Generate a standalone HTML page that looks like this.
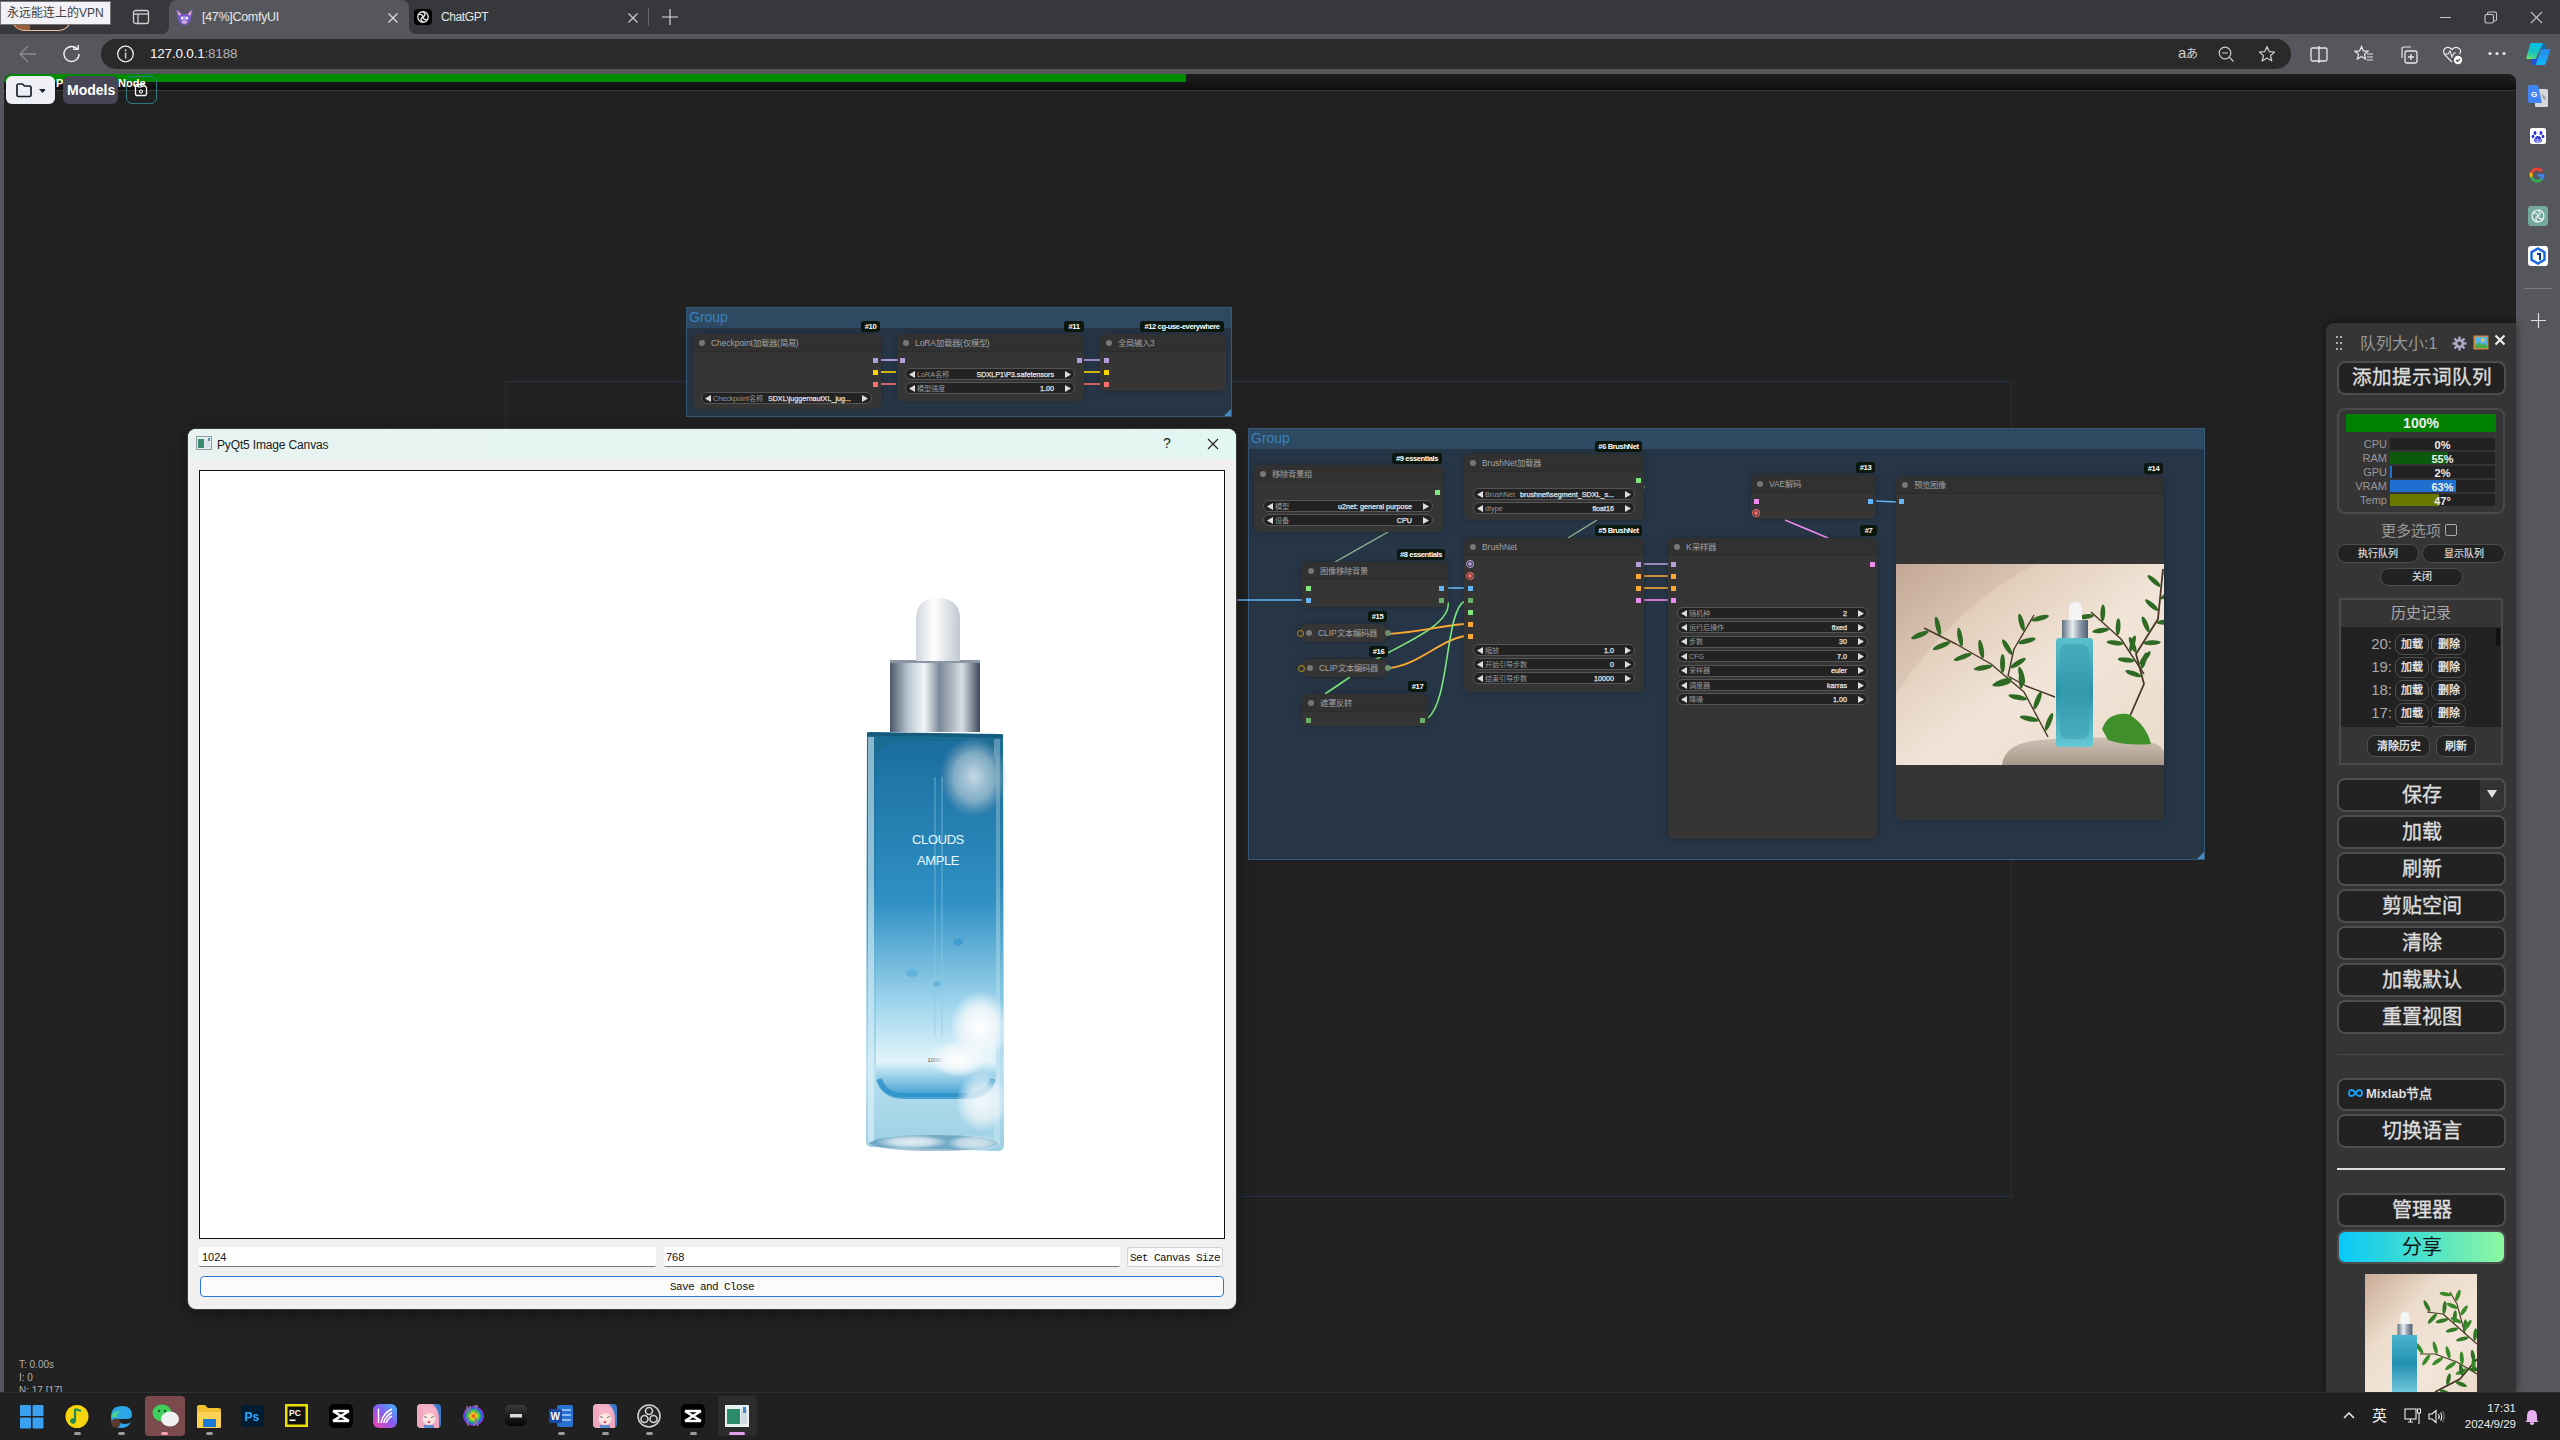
<!DOCTYPE html><html lang="zh-CN"><head><meta charset="utf-8"><style>
*{box-sizing:border-box;margin:0;padding:0}
html,body{width:2560px;height:1440px;overflow:hidden;background:#222;font-family:"Liberation Sans",sans-serif}
.a{position:absolute}
.t{position:absolute;white-space:nowrap;line-height:1}
</style></head><body><div class="a" style="left:0px;top:0px;width:2560px;height:34px;background:#37383c"></div>
<div class="a" style="left:0px;top:34px;width:2560px;height:40px;background:#56575c"></div>
<div class="a" style="left:0px;top:74px;width:4px;height:1318px;background:#56575c"></div>
<div class="a" style="left:2516px;top:74px;width:44px;height:1318px;background:#56575c"></div>
<div class="a" style="left:169px;top:0px;width:240px;height:34px;background:#56575c;border-radius:8px 8px 0 0"></div>
<div class="a" style="left:161px;top:26px;width:8px;height:8px;background:radial-gradient(circle at 0 0,#37383c 8px,#56575c 8.5px)"></div>
<div class="a" style="left:409px;top:26px;width:8px;height:8px;background:radial-gradient(circle at 100% 0,#37383c 8px,#56575c 8.5px)"></div>
<div class="a" style="left:11px;top:14px;width:61px;height:17px;border-radius:0 0 14px 14px;border:1.5px solid #e8c0a0;border-top:none;background:#3a3232"></div>
<div class="a" style="left:14px;top:22px;width:16px;height:8px;background:#c07040;border-radius:0 0 0 8px;opacity:.7"></div>
<div class="a" style="left:0px;top:1px;width:111px;height:24px;background:#f1f1f6;border:1px solid #777"></div>
<div class="t" style="left:7px;top:7px;font-size:12px;color:#404040">永远能连上的VPN</div>
<svg class="a" style="left:132px;top:9px;" width="18" height="16" viewBox="0 0 18 16"><rect x="1.5" y="1.5" width="15" height="13" rx="2" fill="none" stroke="#d0d0d0" stroke-width="1.3"/><line x1="1.5" y1="5" x2="16.5" y2="5" stroke="#d0d0d0" stroke-width="1.3"/><line x1="6" y1="5" x2="6" y2="14.5" stroke="#d0d0d0" stroke-width="1.3"/></svg>
<svg class="a" style="left:175px;top:8px;" width="19" height="18" viewBox="0 0 19 18"><path d="M1 1 L7 6 H12 L18 1 L16 10 Q15 17 9.5 17 Q4 17 3 10 Z" fill="#7a5ad0"/><path d="M2 2 L6 6 L4 8 Z M17 2 L13 6 L15 8 Z" fill="#f0b0c8"/><path d="M6 9 Q9.5 7 13 9 L12 14 Q9.5 16 7 14 Z" fill="#a890e8"/><circle cx="7" cy="10" r="1.2" fill="#fff"/><circle cx="12" cy="10" r="1.2" fill="#fff"/><path d="M7.5 14 Q9.5 15.5 11.5 14" stroke="#f4c0c8" stroke-width="1.6" fill="none"/></svg>
<div class="t" style="left:202px;top:11px;font-size:12.5px;letter-spacing:-0.3px;color:#e8e8e8">[47%]ComfyUI</div>
<svg class="a" style="left:387px;top:12px;" width="12" height="12" viewBox="0 0 12 12"><path d="M1.5 1.5 L10.5 10.5 M10.5 1.5 L1.5 10.5" stroke="#e0e0e0" stroke-width="1.1"/></svg>
<div class="a" style="left:414px;top:9px;width:18px;height:16px;background:#000;border-radius:4px"></div>
<svg class="a" style="left:415px;top:9px;" width="16" height="16" viewBox="0 0 16 16"><g fill="none" stroke="#e8e8e8" stroke-width="1.4"><circle cx="8" cy="8" r="5.2"/><path d="M8 2.8 Q12 6 8 8 Q4 10 8 13.2"/><path d="M3.5 5.4 Q8 5 8 8 Q8 11 12.5 10.6"/></g></svg>
<div class="t" style="left:441px;top:11px;font-size:12px;letter-spacing:-0.4px;color:#e8e8e8">ChatGPT</div>
<svg class="a" style="left:627px;top:12px;" width="12" height="12" viewBox="0 0 12 12"><path d="M1.5 1.5 L10.5 10.5 M10.5 1.5 L1.5 10.5" stroke="#d0d0d0" stroke-width="1.1"/></svg>
<div class="a" style="left:648px;top:8px;width:1px;height:18px;background:#666"></div>
<svg class="a" style="left:661px;top:8px;" width="18" height="18" viewBox="0 0 18 18"><path d="M9 1 V17 M1 9 H17" stroke="#e0e0e0" stroke-width="1.1"/></svg>
<div class="a" style="left:2440px;top:17px;width:11px;height:1px;background:#c8c8c8"></div>
<svg class="a" style="left:2484px;top:11px;" width="14" height="13" viewBox="0 0 14 13"><rect x="1" y="3.5" width="8.5" height="8.5" rx="1.5" fill="none" stroke="#c8c8c8" stroke-width="1.1"/><path d="M3.5 3.5 V2.5 Q3.5 1 5 1 H11 Q12.5 1 12.5 2.5 V8.5 Q12.5 10 11 10 H9.5" fill="none" stroke="#c8c8c8" stroke-width="1.1"/></svg>
<svg class="a" style="left:2530px;top:11px;" width="13" height="13" viewBox="0 0 13 13"><path d="M1 1 L12 12 M12 1 L1 12" stroke="#c8c8c8" stroke-width="1.1"/></svg>
<svg class="a" style="left:18px;top:45px;" width="22" height="18" viewBox="0 0 22 18"><path d="M10 1 L2 9 L10 17 M2 9 H18" fill="none" stroke="#8c8d91" stroke-width="1.3"/></svg>
<svg class="a" style="left:62px;top:45px;" width="20" height="18" viewBox="0 0 20 18"><path d="M15.5 4.5 A7.5 7.5 0 1 0 17 9" fill="none" stroke="#f2f2f2" stroke-width="1.4"/><path d="M11 4.2 H16.2 V-1" fill="none" stroke="#f2f2f2" stroke-width="1.4"/></svg>
<div class="a" style="left:101px;top:39px;width:2190px;height:30px;background:#2a2a2a;border-radius:15px"></div>
<svg class="a" style="left:116px;top:45px;" width="20" height="18" viewBox="0 0 20 18"><circle cx="9.5" cy="9" r="7.8" fill="none" stroke="#eee" stroke-width="1.3"/><rect x="8.8" y="7.5" width="1.6" height="6" fill="#ccc"/><circle cx="9.6" cy="5.2" r="1" fill="#ccc"/></svg>
<div class="t" style="left:150px;top:47px;font-size:13.5px;letter-spacing:-0.2px;color:#fafafa">127.0.0.1<span style="color:#b4b4b4">:8188</span></div>
<div class="t" style="left:2178px;top:45px;font-size:15px;color:#cfcfcf">a<span style="font-size:12px">あ</span></div>
<svg class="a" style="left:2218px;top:46px;" width="18" height="17" viewBox="0 0 18 17"><circle cx="7" cy="7" r="5.8" fill="none" stroke="#cfcfcf" stroke-width="1.2"/><path d="M4 7 H10 M11.2 11.2 L15.5 15.5" stroke="#cfcfcf" stroke-width="1.2"/></svg>
<svg class="a" style="left:2258px;top:45px;" width="18" height="18" viewBox="0 0 18 18"><path d="M9 1.5 L11.2 6.6 L16.6 7 L12.5 10.6 L13.8 16 L9 13.1 L4.2 16 L5.5 10.6 L1.4 7 L6.8 6.6 Z" fill="none" stroke="#cfcfcf" stroke-width="1.2" stroke-linejoin="round"/></svg>
<svg class="a" style="left:2310px;top:46px;" width="18" height="17" viewBox="0 0 18 17"><rect x="1" y="2" width="16" height="13" rx="1.5" fill="none" stroke="#e8e8e8" stroke-width="1.3"/><line x1="9" y1="0" x2="9" y2="17" stroke="#e8e8e8" stroke-width="1.4"/></svg>
<svg class="a" style="left:2354px;top:45px;" width="20" height="18" viewBox="0 0 20 18"><path d="M7.5 1.5 L9.4 5.9 L14 6.3 L10.5 9.3 L11.6 14 L7.5 11.5 L3.4 14 L4.5 9.3 L1 6.3 L5.6 5.9 Z" fill="none" stroke="#e8e8e8" stroke-width="1.2"/><path d="M13 9 H19 M13 12 H19 M13 15 H19" stroke="#e8e8e8" stroke-width="1.2"/></svg>
<svg class="a" style="left:2399px;top:45px;" width="19" height="19" viewBox="0 0 19 19"><path d="M3 13 V4 Q3 2 5 2 H12" fill="none" stroke="#e8e8e8" stroke-width="1.2"/><rect x="6" y="6" width="12" height="12" rx="2" fill="none" stroke="#e8e8e8" stroke-width="1.3"/><path d="M12 9 V15 M9 12 H15" stroke="#e8e8e8" stroke-width="1.3"/></svg>
<svg class="a" style="left:2442px;top:45px;" width="22" height="20" viewBox="0 0 22 20"><path d="M10 17 L3 10 Q0 6 3 3.5 Q6.5 1 10 4.5 Q13.5 1 17 3.5 Q20 6 17.5 9" fill="none" stroke="#e8e8e8" stroke-width="1.2"/><path d="M2 9 H6 L8 6 L10 12 L12 8 H14" fill="none" stroke="#e8e8e8" stroke-width="1.1"/><circle cx="16" cy="15" r="4.2" fill="#fff"/><path d="M14 15 L15.5 16.5 L18 13.8" stroke="#444" stroke-width="1.2" fill="none"/></svg>
<svg class="a" style="left:2488px;top:51px;" width="18" height="5" viewBox="0 0 18 5"><circle cx="2" cy="2.5" r="1.6" fill="#e8e8e8"/><circle cx="9" cy="2.5" r="1.6" fill="#e8e8e8"/><circle cx="16" cy="2.5" r="1.6" fill="#e8e8e8"/></svg>
<svg class="a" style="left:2510px;top:36px;" width="50" height="36" viewBox="0 0 50 36"><defs><linearGradient id="cpl" x1="0.6" y1="0" x2="0.3" y2="1"><stop offset="0" stop-color="#00bff0"/><stop offset=".6" stop-color="#1cc4b8"/><stop offset="1" stop-color="#5ae27a"/></linearGradient><linearGradient id="cpr" x1="0.6" y1="0" x2="0.4" y2="1"><stop offset="0" stop-color="#2a86ee"/><stop offset="1" stop-color="#10b8fa"/></linearGradient></defs><path d="M28 7 H32 Q34.5 7 35 9.5 L35.5 13 H30 Z" fill="#0a6cae"/><path d="M21 22 H27 L26.5 29 H24 Q22 29 21.6 27 Z" fill="#2252d6"/><path d="M21.5 7 H31.5 Q33 7 32.5 8.4 L26.2 21.8 Q25.6 23 24.3 23 H17.5 Q16 23 16.4 21.6 L20 8.4 Q20.4 7 21.5 7 Z" fill="url(#cpl)"/><path d="M32.5 13 H39 Q40.6 13 40.2 14.4 L35.8 27.6 Q35.3 29 34 29 H27.2 Q25.8 29 26.2 27.6 L30.6 14.4 Q31 13 32.5 13 Z" fill="url(#cpr)"/></svg>
<svg class="a" style="left:2527px;top:85px;" width="22" height="23" viewBox="0 0 22 23"><rect x="8" y="4" width="13" height="18" rx="1.5" fill="#d8d8d8"/><path d="M1 2 Q1 0 3 0 H11 L15 18 H3 Q1 18 1 16 Z" fill="#4286f5"/><text x="4" y="12" font-size="8" fill="#fff" font-family="Liberation Sans" font-weight="bold">G</text><path d="M15 9 L18 15 M16 12 H19" stroke="#888" stroke-width="1"/></svg>
<div class="a" style="left:2530px;top:128px;width:16px;height:16px;background:#fff;border-radius:2px"></div>
<svg class="a" style="left:2530px;top:128px;" width="16" height="16" viewBox="0 0 16 16"><g fill="#2932e1"><ellipse cx="5" cy="5" rx="1.5" ry="2"/><ellipse cx="11" cy="5" rx="1.5" ry="2"/><ellipse cx="3" cy="8.5" rx="1.4" ry="1.8"/><ellipse cx="13" cy="8.5" rx="1.4" ry="1.8"/><path d="M4 13 Q5 8 8 8 Q11 8 12 13 Q11 15 8 14.5 Q5 15 4 13Z"/></g><text x="5.2" y="13.5" font-size="5" fill="#fff" font-family="Liberation Sans">du</text></svg>
<svg class="a" style="left:2529px;top:167px;" width="18" height="18" viewBox="0 0 18 18"><g fill="none" stroke-width="3"><path d="M12.6 4.1 A6 6 0 0 0 2.4 6" stroke="#ea4335"/><path d="M2.4 6 A6 6 0 0 0 2.4 10.1" stroke="#fbbc05"/><path d="M2.4 10.1 A6 6 0 0 0 12.3 12.3" stroke="#34a853"/><path d="M12.3 12.3 A6 6 0 0 0 14 8.5" stroke="#4285f4"/></g><path d="M8.5 7.2 H15.4 V9.6 H8.5 Z" fill="#4285f4"/></svg>
<div class="a" style="left:2528px;top:206px;width:20px;height:20px;background:#75a99c;border-radius:3px"></div>
<svg class="a" style="left:2528px;top:206px;" width="20" height="20" viewBox="0 0 20 20"><g fill="none" stroke="#fff" stroke-width="1.2" opacity=".9"><circle cx="10" cy="10" r="6"/><path d="M10 4 Q14.5 7.5 10 10 Q5.5 12.5 10 16"/><path d="M4.8 7 Q10 6.5 10 10 Q10 13.5 15.2 13"/></g></svg>
<div class="a" style="left:2528px;top:246px;width:20px;height:20px;background:#fff;border-radius:3px"></div>
<svg class="a" style="left:2528px;top:246px;" width="20" height="20" viewBox="0 0 20 20"><path d="M10 2.5 L16.5 6.2 V13.8 L10 17.5 L3.5 13.8 V6.2 Z" fill="none" stroke="#1566e0" stroke-width="2.4"/><path d="M9 8 H12 V14" fill="none" stroke="#0a3a90" stroke-width="2"/></svg>
<div class="a" style="left:2524px;top:288px;width:28px;height:1px;background:#7a7b80"></div>
<svg class="a" style="left:2530px;top:312px;" width="17" height="17" viewBox="0 0 17 17"><path d="M8.5 1 V16 M1 8.5 H16" stroke="#e0e0e0" stroke-width="1.2"/></svg>
<div class="a" style="left:0px;top:74px;width:2516px;height:20px;background:#56575c"></div>
<div class="a" style="left:4px;top:74px;width:2512px;height:1318px;background-color:#222;background-image:linear-gradient(#1e1e1e 1px,transparent 1px),linear-gradient(90deg,#1e1e1e 1px,transparent 1px),linear-gradient(#202020 1px,transparent 1px),linear-gradient(90deg,#202020 1px,transparent 1px);background-size:24px 24px,24px 24px,6px 6px,6px 6px;background-position:-1px 2px,-3px 0,-1px 2px,-3px 0;border-radius:8px 8px 0 0;overflow:hidden"></div>
<div class="a" style="left:4px;top:74px;width:2512px;height:16px;background:linear-gradient(#202020,#0e0e0e);border-radius:8px 8px 0 0"></div>
<div class="a" style="left:4px;top:90px;width:2512px;height:1px;background:#3a3a3a"></div>
<div class="a" style="left:4px;top:74px;width:1182px;height:8px;background:#008a00;border-radius:8px 0 0 0"></div>
<div class="a" style="left:505px;top:381px;width:1507px;height:816px;border:1px solid #1f3147"></div>
<div class="t" style="left:56px;top:78px;font-size:11px;color:#fff;font-weight:bold">P</div>
<div class="t" style="left:118px;top:78px;font-size:11px;color:#fff;font-weight:bold">Node</div>
<div class="a" style="left:6px;top:76px;width:49px;height:28px;background:#eef0f6;border-radius:6px"></div>
<svg class="a" style="left:15px;top:82px;" width="30" height="16" viewBox="0 0 30 16"><path d="M2 3.5 Q2 2 3.5 2 H7.5 L9.5 4 H14.5 Q16 4 16 5.5 V13 Q16 14.5 14.5 14.5 H3.5 Q2 14.5 2 13 Z" fill="none" stroke="#1b2030" stroke-width="1.7" stroke-linejoin="round"/><path d="M24 7 H31 L27.5 11 Z" fill="#1b2030"/></svg>
<div class="a" style="left:63px;top:76px;width:55px;height:28px;background:#464656;border-radius:6px"></div>
<div class="t" style="left:67px;top:83px;font-size:14px;color:#fff;font-weight:bold">Models</div>
<div class="a" style="left:126px;top:76px;width:31px;height:28px;border:1px solid #2f7b80;border-radius:6px"></div>
<svg class="a" style="left:134px;top:83px;" width="14" height="14" viewBox="0 0 14 14"><path d="M1.5 3 Q1.5 1.5 3 1.5 H9.5 L12.5 4.5 V11 Q12.5 12.5 11 12.5 H3 Q1.5 12.5 1.5 11 Z" fill="none" stroke="#fff" stroke-width="1.3"/><circle cx="7" cy="8.5" r="1.5" fill="none" stroke="#fff" stroke-width="1.1"/><path d="M4 1.5 V4 H8" stroke="#fff" stroke-width="1" fill="none"/></svg>
<div class="t" style="left:19px;top:1360px;font-size:10px;color:#b0b0b0">T: 0.00s</div>
<div class="t" style="left:19px;top:1373px;font-size:10px;color:#b0b0b0">I: 0</div>
<div class="t" style="left:19px;top:1386px;font-size:10px;color:#b0b0b0">N: 17 [17]</div>
<div class="a" style="left:686px;top:307px;width:546px;height:110px;background:#273646;border:1px solid #35597a"></div>
<div class="a" style="left:687px;top:308px;width:544px;height:20px;background:#2e4a62"></div>
<div class="t" style="left:689px;top:310px;font-size:14px;color:#3a82bd">Group</div>
<svg class="a" style="left:1224px;top:409px;" width="7" height="7" viewBox="0 0 7 7"><path d="M7 0 V7 H0 Z" fill="#4a8ac0"/></svg>
<div class="a" style="left:693px;top:334px;width:188px;height:75px;background:#353535;border-radius:6px;box-shadow:0 0 6px rgba(0,0,0,.25)"></div>
<div class="a" style="left:693px;top:334px;width:188px;height:18px;background:#313131;border-radius:6px 6px 0 0;border-bottom:1px solid #2c2c2c"></div>
<div class="a" style="left:699px;top:340px;width:6px;height:6px;background:#777;border-radius:50%"></div>
<div class="t" style="left:711px;top:339px;font-size:8.4px;color:#a2a2a2">Checkpoint加载器(简易)</div>
<div class="a" style="left:861px;top:321px;width:19px;height:11px;background:#0b170c;border-radius:3px"></div>
<div class="t" style="left:861px;top:323px;width:19px;text-align:center;font-size:7.6px;color:#fff;font-weight:bold;letter-spacing:-0.4px">#10</div>
<div class="a" style="left:872.5px;top:357.5px;width:5px;height:5px;background:#b39ddb"></div>
<div class="a" style="left:872.5px;top:369.5px;width:5px;height:5px;background:#ffd500"></div>
<div class="a" style="left:872.5px;top:381.5px;width:5px;height:5px;background:#ff6e6e"></div>
<div class="a" style="left:701px;top:392px;width:171px;height:12px;background:#222;border:1px solid #555;border-radius:6px"></div>
<svg class="a" style="left:704.5px;top:394.5px;" width="6" height="7" viewBox="0 0 6 7"><path d="M6 0 V7 L0 3.5 Z" fill="#ddd"/></svg>
<svg class="a" style="left:862px;top:394.5px;" width="6" height="7" viewBox="0 0 6 7"><path d="M0 0 V7 L6 3.5 Z" fill="#ddd"/></svg>
<div class="t" style="left:713px;top:394.6px;font-size:7.2px;color:#999">Checkpoint名称</div>
<div class="t" style="left:651px;top:394.6px;font-size:7.2px;color:#e4e4e4;width:200px;text-align:right;-webkit-text-stroke:0.25px #e4e4e4"><b style="font-weight:normal;color:#ddd">SDXL\juggernautXL_jug...</b></div>
<div class="a" style="left:897px;top:334px;width:187px;height:67px;background:#353535;border-radius:6px;box-shadow:0 0 6px rgba(0,0,0,.25)"></div>
<div class="a" style="left:897px;top:334px;width:187px;height:18px;background:#313131;border-radius:6px 6px 0 0;border-bottom:1px solid #2c2c2c"></div>
<div class="a" style="left:903px;top:340px;width:6px;height:6px;background:#777;border-radius:50%"></div>
<div class="t" style="left:915px;top:339px;font-size:8.4px;color:#a2a2a2">LoRA加载器(仅模型)</div>
<div class="a" style="left:1064px;top:321px;width:20px;height:11px;background:#0b170c;border-radius:3px"></div>
<div class="t" style="left:1064px;top:323px;width:20px;text-align:center;font-size:7.6px;color:#fff;font-weight:bold;letter-spacing:-0.4px">#11</div>
<div class="a" style="left:899.5px;top:357.5px;width:5px;height:5px;background:#b39ddb"></div>
<div class="a" style="left:1076.5px;top:357.5px;width:5px;height:5px;background:#b39ddb"></div>
<div class="a" style="left:905px;top:368px;width:170px;height:12px;background:#222;border:1px solid #555;border-radius:6px"></div>
<svg class="a" style="left:908.5px;top:370.5px;" width="6" height="7" viewBox="0 0 6 7"><path d="M6 0 V7 L0 3.5 Z" fill="#ddd"/></svg>
<svg class="a" style="left:1065px;top:370.5px;" width="6" height="7" viewBox="0 0 6 7"><path d="M0 0 V7 L6 3.5 Z" fill="#ddd"/></svg>
<div class="t" style="left:917px;top:370.6px;font-size:7.2px;color:#999">LoRA名称</div>
<div class="t" style="left:854px;top:370.6px;font-size:7.2px;color:#e4e4e4;width:200px;text-align:right;-webkit-text-stroke:0.25px #e4e4e4">SDXLP1\P3.safetensors</div>
<div class="a" style="left:905px;top:382px;width:170px;height:12px;background:#222;border:1px solid #555;border-radius:6px"></div>
<svg class="a" style="left:908.5px;top:384.5px;" width="6" height="7" viewBox="0 0 6 7"><path d="M6 0 V7 L0 3.5 Z" fill="#ddd"/></svg>
<svg class="a" style="left:1065px;top:384.5px;" width="6" height="7" viewBox="0 0 6 7"><path d="M0 0 V7 L6 3.5 Z" fill="#ddd"/></svg>
<div class="t" style="left:917px;top:384.6px;font-size:7.2px;color:#999">模型强度</div>
<div class="t" style="left:854px;top:384.6px;font-size:7.2px;color:#e4e4e4;width:200px;text-align:right;-webkit-text-stroke:0.25px #e4e4e4">1.00</div>
<div class="a" style="left:1100px;top:334px;width:126px;height:57px;background:#353535;border-radius:6px;box-shadow:0 0 6px rgba(0,0,0,.25)"></div>
<div class="a" style="left:1100px;top:334px;width:126px;height:18px;background:#313131;border-radius:6px 6px 0 0;border-bottom:1px solid #2c2c2c"></div>
<div class="a" style="left:1106px;top:340px;width:6px;height:6px;background:#777;border-radius:50%"></div>
<div class="t" style="left:1118px;top:339px;font-size:8.4px;color:#a2a2a2">全局输入3</div>
<div class="a" style="left:1140px;top:321px;width:84px;height:11px;background:#0b170c;border-radius:3px"></div>
<div class="t" style="left:1140px;top:323px;width:84px;text-align:center;font-size:7.6px;color:#fff;font-weight:bold;letter-spacing:-0.4px">#12 cg-use-everywhere</div>
<div class="a" style="left:1103.5px;top:357.5px;width:5px;height:5px;background:#b39ddb"></div>
<div class="a" style="left:1103.5px;top:369.5px;width:5px;height:5px;background:#ffd500"></div>
<div class="a" style="left:1103.5px;top:381.5px;width:5px;height:5px;background:#ff6e6e"></div>
<div class="a" style="left:1248px;top:428px;width:957px;height:432px;background:#273646;border:1px solid #35597a"></div>
<div class="a" style="left:1249px;top:429px;width:955px;height:20px;background:#2e4a62"></div>
<div class="t" style="left:1251px;top:431px;font-size:14px;color:#3a82bd">Group</div>
<svg class="a" style="left:2197px;top:852px;" width="7" height="7" viewBox="0 0 7 7"><path d="M7 0 V7 H0 Z" fill="#4a8ac0"/></svg>
<svg class="a" style="left:0;top:0" width="2560" height="1440"><path d="M881 360 H896" fill="none" stroke="#b39ddb" stroke-width="1.6"/><path d="M881 372 H896" fill="none" stroke="#ffd500" stroke-width="1.6"/><path d="M881 384 H896" fill="none" stroke="#ff6e6e" stroke-width="1.6"/><path d="M884 360 H898" fill="none" stroke="#b39ddb" stroke-width="1.6"/><path d="M1084 360 H1100" fill="none" stroke="#b39ddb" stroke-width="1.6"/><path d="M1084 372 H1100" fill="none" stroke="#ffd500" stroke-width="1.6"/><path d="M1084 384 H1100" fill="none" stroke="#ff6e6e" stroke-width="1.6"/><path d="M1237 600 H1303" fill="none" stroke="#64b5f6" stroke-width="1.6"/><path d="M1448 588 H1465" fill="none" stroke="#64b5f6" stroke-width="1.6"/><path d="M1388 532 L1335 562" fill="none" stroke="#9bc09b" stroke-width="1.3"/><path d="M1597 520 L1568 538" fill="none" stroke="#9bc09b" stroke-width="1.3"/><path d="M1448 602 C1452 625 1400 645 1375 660" fill="none" stroke="#7ee87e" stroke-width="1.6"/><path d="M1350 677 L1325 694" fill="none" stroke="#7ee87e" stroke-width="1.6"/><path d="M1389 634 C1420 632 1440 626 1465 624" fill="none" stroke="#ffa931" stroke-width="1.8"/><path d="M1390 668 C1420 664 1440 640 1465 636" fill="none" stroke="#ffa931" stroke-width="1.8"/><path d="M1428 718 C1450 700 1445 610 1465 601" fill="none" stroke="#7ee87e" stroke-width="1.6"/><path d="M1644 564 H1668" fill="none" stroke="#b39ddb" stroke-width="1.6"/><path d="M1644 576 H1668" fill="none" stroke="#ffa931" stroke-width="1.6"/><path d="M1644 588 H1668" fill="none" stroke="#ffa931" stroke-width="1.6"/><path d="M1644 600 H1668" fill="none" stroke="#f08cf0" stroke-width="1.6"/><path d="M1785 520 L1828 538" fill="none" stroke="#f08cf0" stroke-width="1.8"/><path d="M1876 501 L1897 502" fill="none" stroke="#64b5f6" stroke-width="1.6"/><path d="M1642 484 Q1646 486 1643 490" fill="none" stroke="#9bc09b" stroke-width="1"/></svg>
<div class="a" style="left:1254px;top:465px;width:189px;height:67px;background:#353535;border-radius:6px;box-shadow:0 0 6px rgba(0,0,0,.25)"></div>
<div class="a" style="left:1254px;top:465px;width:189px;height:18px;background:#313131;border-radius:6px 6px 0 0;border-bottom:1px solid #2c2c2c"></div>
<div class="a" style="left:1260px;top:471px;width:6px;height:6px;background:#777;border-radius:50%"></div>
<div class="t" style="left:1272px;top:470px;font-size:8.4px;color:#a2a2a2">移除背景组</div>
<div class="a" style="left:1392px;top:453px;width:50px;height:11px;background:#0b170c;border-radius:3px"></div>
<div class="t" style="left:1392px;top:455px;width:50px;text-align:center;font-size:7.6px;color:#fff;font-weight:bold;letter-spacing:-0.4px">#9 essentials</div>
<div class="a" style="left:1434.5px;top:489.5px;width:5px;height:5px;background:#7ee87e"></div>
<div class="a" style="left:1263px;top:500px;width:170px;height:12px;background:#222;border:1px solid #555;border-radius:6px"></div>
<svg class="a" style="left:1266.5px;top:502.5px;" width="6" height="7" viewBox="0 0 6 7"><path d="M6 0 V7 L0 3.5 Z" fill="#ddd"/></svg>
<svg class="a" style="left:1423px;top:502.5px;" width="6" height="7" viewBox="0 0 6 7"><path d="M0 0 V7 L6 3.5 Z" fill="#ddd"/></svg>
<div class="t" style="left:1275px;top:502.6px;font-size:7.2px;color:#999">模型</div>
<div class="t" style="left:1212px;top:502.6px;font-size:7.2px;color:#e4e4e4;width:200px;text-align:right;-webkit-text-stroke:0.25px #e4e4e4">u2net: general purpose</div>
<div class="a" style="left:1263px;top:514px;width:170px;height:12px;background:#222;border:1px solid #555;border-radius:6px"></div>
<svg class="a" style="left:1266.5px;top:516.5px;" width="6" height="7" viewBox="0 0 6 7"><path d="M6 0 V7 L0 3.5 Z" fill="#ddd"/></svg>
<svg class="a" style="left:1423px;top:516.5px;" width="6" height="7" viewBox="0 0 6 7"><path d="M0 0 V7 L6 3.5 Z" fill="#ddd"/></svg>
<div class="t" style="left:1275px;top:516.6px;font-size:7.2px;color:#999">设备</div>
<div class="t" style="left:1212px;top:516.6px;font-size:7.2px;color:#e4e4e4;width:200px;text-align:right;-webkit-text-stroke:0.25px #e4e4e4">CPU</div>
<div class="a" style="left:1464px;top:454px;width:180px;height:66px;background:#353535;border-radius:6px;box-shadow:0 0 6px rgba(0,0,0,.25)"></div>
<div class="a" style="left:1464px;top:454px;width:180px;height:18px;background:#313131;border-radius:6px 6px 0 0;border-bottom:1px solid #2c2c2c"></div>
<div class="a" style="left:1470px;top:460px;width:6px;height:6px;background:#777;border-radius:50%"></div>
<div class="t" style="left:1482px;top:459px;font-size:8.4px;color:#a2a2a2">BrushNet加载器</div>
<div class="a" style="left:1595px;top:441px;width:47px;height:11px;background:#0b170c;border-radius:3px"></div>
<div class="t" style="left:1595px;top:443px;width:47px;text-align:center;font-size:7.6px;color:#fff;font-weight:bold;letter-spacing:-0.4px">#6 BrushNet</div>
<div class="a" style="left:1635.5px;top:477.5px;width:5px;height:5px;background:#7ee87e"></div>
<div class="a" style="left:1473px;top:488px;width:162px;height:12px;background:#222;border:1px solid #555;border-radius:6px"></div>
<svg class="a" style="left:1476.5px;top:490.5px;" width="6" height="7" viewBox="0 0 6 7"><path d="M6 0 V7 L0 3.5 Z" fill="#ddd"/></svg>
<svg class="a" style="left:1625px;top:490.5px;" width="6" height="7" viewBox="0 0 6 7"><path d="M0 0 V7 L6 3.5 Z" fill="#ddd"/></svg>
<div class="t" style="left:1485px;top:490.6px;font-size:7.2px;color:#999">BrushNet</div>
<div class="t" style="left:1414px;top:490.6px;font-size:7.2px;color:#e4e4e4;width:200px;text-align:right;-webkit-text-stroke:0.25px #e4e4e4">brushnet\segment_SDXL_s...</div>
<div class="a" style="left:1473px;top:502px;width:162px;height:12px;background:#222;border:1px solid #555;border-radius:6px"></div>
<svg class="a" style="left:1476.5px;top:504.5px;" width="6" height="7" viewBox="0 0 6 7"><path d="M6 0 V7 L0 3.5 Z" fill="#ddd"/></svg>
<svg class="a" style="left:1625px;top:504.5px;" width="6" height="7" viewBox="0 0 6 7"><path d="M0 0 V7 L6 3.5 Z" fill="#ddd"/></svg>
<div class="t" style="left:1485px;top:504.6px;font-size:7.2px;color:#999">dtype</div>
<div class="t" style="left:1414px;top:504.6px;font-size:7.2px;color:#e4e4e4;width:200px;text-align:right;-webkit-text-stroke:0.25px #e4e4e4">float16</div>
<div class="a" style="left:1464px;top:538px;width:180px;height:154px;background:#353535;border-radius:6px;box-shadow:0 0 6px rgba(0,0,0,.25)"></div>
<div class="a" style="left:1464px;top:538px;width:180px;height:18px;background:#313131;border-radius:6px 6px 0 0;border-bottom:1px solid #2c2c2c"></div>
<div class="a" style="left:1470px;top:544px;width:6px;height:6px;background:#777;border-radius:50%"></div>
<div class="t" style="left:1482px;top:543px;font-size:8.4px;color:#a2a2a2">BrushNet</div>
<div class="a" style="left:1595px;top:525px;width:47px;height:11px;background:#0b170c;border-radius:3px"></div>
<div class="t" style="left:1595px;top:527px;width:47px;text-align:center;font-size:7.6px;color:#fff;font-weight:bold;letter-spacing:-0.4px">#5 BrushNet</div>
<svg class="a" style="left:1465px;top:559px;" width="10" height="10" viewBox="0 0 10 10"><circle cx="5" cy="5" r="3.4" fill="none" stroke="#b39ddb" stroke-width="1.1" opacity=".9"/><circle cx="5" cy="5" r="1.9" fill="#b39ddb"/></svg>
<svg class="a" style="left:1465px;top:571px;" width="10" height="10" viewBox="0 0 10 10"><circle cx="5" cy="5" r="3.4" fill="none" stroke="#ff6e6e" stroke-width="1.1" opacity=".9"/><circle cx="5" cy="5" r="1.9" fill="#ff6e6e"/></svg>
<div class="a" style="left:1467.5px;top:585.5px;width:5px;height:5px;background:#64b5f6"></div>
<div class="a" style="left:1467.5px;top:597.5px;width:5px;height:5px;background:#6ab06a"></div>
<div class="a" style="left:1467.5px;top:609.5px;width:5px;height:5px;background:#7ee87e"></div>
<div class="a" style="left:1467.5px;top:621.5px;width:5px;height:5px;background:#ffa931"></div>
<div class="a" style="left:1467.5px;top:633.5px;width:5px;height:5px;background:#ffa931"></div>
<div class="a" style="left:1635.5px;top:561.5px;width:5px;height:5px;background:#b39ddb"></div>
<div class="a" style="left:1635.5px;top:573.5px;width:5px;height:5px;background:#ffa931"></div>
<div class="a" style="left:1635.5px;top:585.5px;width:5px;height:5px;background:#ffa931"></div>
<div class="a" style="left:1635.5px;top:597.5px;width:5px;height:5px;background:#f08cf0"></div>
<div class="a" style="left:1473px;top:644px;width:162px;height:12px;background:#222;border:1px solid #555;border-radius:6px"></div>
<svg class="a" style="left:1476.5px;top:646.5px;" width="6" height="7" viewBox="0 0 6 7"><path d="M6 0 V7 L0 3.5 Z" fill="#ddd"/></svg>
<svg class="a" style="left:1625px;top:646.5px;" width="6" height="7" viewBox="0 0 6 7"><path d="M0 0 V7 L6 3.5 Z" fill="#ddd"/></svg>
<div class="t" style="left:1485px;top:646.6px;font-size:7.2px;color:#999">缩放</div>
<div class="t" style="left:1414px;top:646.6px;font-size:7.2px;color:#e4e4e4;width:200px;text-align:right;-webkit-text-stroke:0.25px #e4e4e4">1.0</div>
<div class="a" style="left:1473px;top:658px;width:162px;height:12px;background:#222;border:1px solid #555;border-radius:6px"></div>
<svg class="a" style="left:1476.5px;top:660.5px;" width="6" height="7" viewBox="0 0 6 7"><path d="M6 0 V7 L0 3.5 Z" fill="#ddd"/></svg>
<svg class="a" style="left:1625px;top:660.5px;" width="6" height="7" viewBox="0 0 6 7"><path d="M0 0 V7 L6 3.5 Z" fill="#ddd"/></svg>
<div class="t" style="left:1485px;top:660.6px;font-size:7.2px;color:#999">开始引导步数</div>
<div class="t" style="left:1414px;top:660.6px;font-size:7.2px;color:#e4e4e4;width:200px;text-align:right;-webkit-text-stroke:0.25px #e4e4e4">0</div>
<div class="a" style="left:1473px;top:672px;width:162px;height:12px;background:#222;border:1px solid #555;border-radius:6px"></div>
<svg class="a" style="left:1476.5px;top:674.5px;" width="6" height="7" viewBox="0 0 6 7"><path d="M6 0 V7 L0 3.5 Z" fill="#ddd"/></svg>
<svg class="a" style="left:1625px;top:674.5px;" width="6" height="7" viewBox="0 0 6 7"><path d="M0 0 V7 L6 3.5 Z" fill="#ddd"/></svg>
<div class="t" style="left:1485px;top:674.6px;font-size:7.2px;color:#999">结束引导步数</div>
<div class="t" style="left:1414px;top:674.6px;font-size:7.2px;color:#e4e4e4;width:200px;text-align:right;-webkit-text-stroke:0.25px #e4e4e4">10000</div>
<div class="a" style="left:1302px;top:562px;width:146px;height:45px;background:#353535;border-radius:6px;box-shadow:0 0 6px rgba(0,0,0,.25)"></div>
<div class="a" style="left:1302px;top:562px;width:146px;height:18px;background:#313131;border-radius:6px 6px 0 0;border-bottom:1px solid #2c2c2c"></div>
<div class="a" style="left:1308px;top:568px;width:6px;height:6px;background:#777;border-radius:50%"></div>
<div class="t" style="left:1320px;top:567px;font-size:8.4px;color:#a2a2a2">图像移除背景</div>
<div class="a" style="left:1397px;top:549px;width:48px;height:11px;background:#0b170c;border-radius:3px"></div>
<div class="t" style="left:1397px;top:551px;width:48px;text-align:center;font-size:7.6px;color:#fff;font-weight:bold;letter-spacing:-0.4px">#8 essentials</div>
<div class="a" style="left:1305.5px;top:585.5px;width:5px;height:5px;background:#7ee87e"></div>
<div class="a" style="left:1305.5px;top:597.5px;width:5px;height:5px;background:#64b5f6"></div>
<div class="a" style="left:1438.5px;top:585.5px;width:5px;height:5px;background:#64b5f6"></div>
<div class="a" style="left:1438.5px;top:597.5px;width:5px;height:5px;background:#6ab06a"></div>
<div class="a" style="left:1299px;top:624px;width:90px;height:18px;background:#353535;border-radius:9px;box-shadow:0 0 6px rgba(0,0,0,.3)"></div>
<div class="a" style="left:1297px;top:629.5px;width:7px;height:7px;border:1.3px solid #b89a18;border-radius:50%"></div>
<div class="a" style="left:1306px;top:630.0px;width:6px;height:6px;background:#777;border-radius:50%"></div>
<div class="t" style="left:1318px;top:628.5px;font-size:8.4px;color:#a2a2a2">CLIP文本编码器</div>
<div class="a" style="left:1385px;top:630.0px;width:6px;height:6px;background:#6d8f6d;border-radius:50%"></div>
<div class="a" style="left:1368px;top:611px;width:19px;height:11px;background:#0b170c;border-radius:3px"></div>
<div class="t" style="left:1368px;top:613px;width:19px;text-align:center;font-size:7.6px;color:#fff;font-weight:bold;letter-spacing:-0.4px">#15</div>
<div class="a" style="left:1300px;top:659px;width:89px;height:18px;background:#353535;border-radius:9px;box-shadow:0 0 6px rgba(0,0,0,.3)"></div>
<div class="a" style="left:1298px;top:664.5px;width:7px;height:7px;border:1.3px solid #b89a18;border-radius:50%"></div>
<div class="a" style="left:1307px;top:665.0px;width:6px;height:6px;background:#777;border-radius:50%"></div>
<div class="t" style="left:1319px;top:663.5px;font-size:8.4px;color:#a2a2a2">CLIP文本编码器</div>
<div class="a" style="left:1385px;top:665.0px;width:6px;height:6px;background:#6d8f6d;border-radius:50%"></div>
<div class="a" style="left:1369px;top:646px;width:19px;height:11px;background:#0b170c;border-radius:3px"></div>
<div class="t" style="left:1369px;top:648px;width:19px;text-align:center;font-size:7.6px;color:#fff;font-weight:bold;letter-spacing:-0.4px">#16</div>
<div class="a" style="left:1302px;top:694px;width:126px;height:32px;background:#353535;border-radius:6px;box-shadow:0 0 6px rgba(0,0,0,.25)"></div>
<div class="a" style="left:1302px;top:694px;width:126px;height:18px;background:#313131;border-radius:6px 6px 0 0;border-bottom:1px solid #2c2c2c"></div>
<div class="a" style="left:1308px;top:700px;width:6px;height:6px;background:#777;border-radius:50%"></div>
<div class="t" style="left:1320px;top:699px;font-size:8.4px;color:#a2a2a2">遮罩反转</div>
<div class="a" style="left:1408px;top:681px;width:19px;height:11px;background:#0b170c;border-radius:3px"></div>
<div class="t" style="left:1408px;top:683px;width:19px;text-align:center;font-size:7.6px;color:#fff;font-weight:bold;letter-spacing:-0.4px">#17</div>
<div class="a" style="left:1305.5px;top:717.5px;width:5px;height:5px;background:#6ab06a"></div>
<div class="a" style="left:1419.5px;top:717.5px;width:5px;height:5px;background:#6ab06a"></div>
<div class="a" style="left:1751px;top:475px;width:125px;height:44px;background:#353535;border-radius:6px;box-shadow:0 0 6px rgba(0,0,0,.25)"></div>
<div class="a" style="left:1751px;top:475px;width:125px;height:18px;background:#313131;border-radius:6px 6px 0 0;border-bottom:1px solid #2c2c2c"></div>
<div class="a" style="left:1757px;top:481px;width:6px;height:6px;background:#777;border-radius:50%"></div>
<div class="t" style="left:1769px;top:480px;font-size:8.4px;color:#a2a2a2">VAE解码</div>
<div class="a" style="left:1856px;top:462px;width:19px;height:11px;background:#0b170c;border-radius:3px"></div>
<div class="t" style="left:1856px;top:464px;width:19px;text-align:center;font-size:7.6px;color:#fff;font-weight:bold;letter-spacing:-0.4px">#13</div>
<div class="a" style="left:1753.5px;top:498.5px;width:5px;height:5px;background:#f08cf0"></div>
<svg class="a" style="left:1751px;top:508px;" width="10" height="10" viewBox="0 0 10 10"><circle cx="5" cy="5" r="3.4" fill="none" stroke="#ff6e6e" stroke-width="1.1" opacity=".9"/><circle cx="5" cy="5" r="1.9" fill="#ff6e6e"/></svg>
<div class="a" style="left:1867.5px;top:498.5px;width:5px;height:5px;background:#64b5f6"></div>
<div class="a" style="left:1668px;top:538px;width:209px;height:301px;background:#353535;border-radius:6px;box-shadow:0 0 6px rgba(0,0,0,.25)"></div>
<div class="a" style="left:1668px;top:538px;width:209px;height:18px;background:#313131;border-radius:6px 6px 0 0;border-bottom:1px solid #2c2c2c"></div>
<div class="a" style="left:1674px;top:544px;width:6px;height:6px;background:#777;border-radius:50%"></div>
<div class="t" style="left:1686px;top:543px;font-size:8.4px;color:#a2a2a2">K采样器</div>
<div class="a" style="left:1860px;top:525px;width:17px;height:11px;background:#0b170c;border-radius:3px"></div>
<div class="t" style="left:1860px;top:527px;width:17px;text-align:center;font-size:7.6px;color:#fff;font-weight:bold;letter-spacing:-0.4px">#7</div>
<div class="a" style="left:1670.5px;top:561.5px;width:5px;height:5px;background:#b39ddb"></div>
<div class="a" style="left:1670.5px;top:573.5px;width:5px;height:5px;background:#ffa931"></div>
<div class="a" style="left:1670.5px;top:585.5px;width:5px;height:5px;background:#ffa931"></div>
<div class="a" style="left:1670.5px;top:597.5px;width:5px;height:5px;background:#f08cf0"></div>
<div class="a" style="left:1869.5px;top:561.5px;width:5px;height:5px;background:#f08cf0"></div>
<div class="a" style="left:1677px;top:607.0px;width:191px;height:12px;background:#222;border:1px solid #555;border-radius:6px"></div>
<svg class="a" style="left:1680.5px;top:609.5px;" width="6" height="7" viewBox="0 0 6 7"><path d="M6 0 V7 L0 3.5 Z" fill="#ddd"/></svg>
<svg class="a" style="left:1858px;top:609.5px;" width="6" height="7" viewBox="0 0 6 7"><path d="M0 0 V7 L6 3.5 Z" fill="#ddd"/></svg>
<div class="t" style="left:1689px;top:609.6px;font-size:7.2px;color:#999">随机种</div>
<div class="t" style="left:1647px;top:609.6px;font-size:7.2px;color:#e4e4e4;width:200px;text-align:right;-webkit-text-stroke:0.25px #e4e4e4">2</div>
<div class="a" style="left:1677px;top:621.4px;width:191px;height:12px;background:#222;border:1px solid #555;border-radius:6px"></div>
<svg class="a" style="left:1680.5px;top:623.9px;" width="6" height="7" viewBox="0 0 6 7"><path d="M6 0 V7 L0 3.5 Z" fill="#ddd"/></svg>
<svg class="a" style="left:1858px;top:623.9px;" width="6" height="7" viewBox="0 0 6 7"><path d="M0 0 V7 L6 3.5 Z" fill="#ddd"/></svg>
<div class="t" style="left:1689px;top:624.0px;font-size:7.2px;color:#999">运行后操作</div>
<div class="t" style="left:1647px;top:624.0px;font-size:7.2px;color:#e4e4e4;width:200px;text-align:right;-webkit-text-stroke:0.25px #e4e4e4">fixed</div>
<div class="a" style="left:1677px;top:635.8px;width:191px;height:12px;background:#222;border:1px solid #555;border-radius:6px"></div>
<svg class="a" style="left:1680.5px;top:638.3px;" width="6" height="7" viewBox="0 0 6 7"><path d="M6 0 V7 L0 3.5 Z" fill="#ddd"/></svg>
<svg class="a" style="left:1858px;top:638.3px;" width="6" height="7" viewBox="0 0 6 7"><path d="M0 0 V7 L6 3.5 Z" fill="#ddd"/></svg>
<div class="t" style="left:1689px;top:638.4px;font-size:7.2px;color:#999">步数</div>
<div class="t" style="left:1647px;top:638.4px;font-size:7.2px;color:#e4e4e4;width:200px;text-align:right;-webkit-text-stroke:0.25px #e4e4e4">30</div>
<div class="a" style="left:1677px;top:650.2px;width:191px;height:12px;background:#222;border:1px solid #555;border-radius:6px"></div>
<svg class="a" style="left:1680.5px;top:652.7px;" width="6" height="7" viewBox="0 0 6 7"><path d="M6 0 V7 L0 3.5 Z" fill="#ddd"/></svg>
<svg class="a" style="left:1858px;top:652.7px;" width="6" height="7" viewBox="0 0 6 7"><path d="M0 0 V7 L6 3.5 Z" fill="#ddd"/></svg>
<div class="t" style="left:1689px;top:652.8000000000001px;font-size:7.2px;color:#999">CFG</div>
<div class="t" style="left:1647px;top:652.8000000000001px;font-size:7.2px;color:#e4e4e4;width:200px;text-align:right;-webkit-text-stroke:0.25px #e4e4e4">7.0</div>
<div class="a" style="left:1677px;top:664.6px;width:191px;height:12px;background:#222;border:1px solid #555;border-radius:6px"></div>
<svg class="a" style="left:1680.5px;top:667.1px;" width="6" height="7" viewBox="0 0 6 7"><path d="M6 0 V7 L0 3.5 Z" fill="#ddd"/></svg>
<svg class="a" style="left:1858px;top:667.1px;" width="6" height="7" viewBox="0 0 6 7"><path d="M0 0 V7 L6 3.5 Z" fill="#ddd"/></svg>
<div class="t" style="left:1689px;top:667.2px;font-size:7.2px;color:#999">采样器</div>
<div class="t" style="left:1647px;top:667.2px;font-size:7.2px;color:#e4e4e4;width:200px;text-align:right;-webkit-text-stroke:0.25px #e4e4e4">euler</div>
<div class="a" style="left:1677px;top:679.0px;width:191px;height:12px;background:#222;border:1px solid #555;border-radius:6px"></div>
<svg class="a" style="left:1680.5px;top:681.5px;" width="6" height="7" viewBox="0 0 6 7"><path d="M6 0 V7 L0 3.5 Z" fill="#ddd"/></svg>
<svg class="a" style="left:1858px;top:681.5px;" width="6" height="7" viewBox="0 0 6 7"><path d="M0 0 V7 L6 3.5 Z" fill="#ddd"/></svg>
<div class="t" style="left:1689px;top:681.6px;font-size:7.2px;color:#999">调度器</div>
<div class="t" style="left:1647px;top:681.6px;font-size:7.2px;color:#e4e4e4;width:200px;text-align:right;-webkit-text-stroke:0.25px #e4e4e4">karras</div>
<div class="a" style="left:1677px;top:693.4px;width:191px;height:12px;background:#222;border:1px solid #555;border-radius:6px"></div>
<svg class="a" style="left:1680.5px;top:695.9px;" width="6" height="7" viewBox="0 0 6 7"><path d="M6 0 V7 L0 3.5 Z" fill="#ddd"/></svg>
<svg class="a" style="left:1858px;top:695.9px;" width="6" height="7" viewBox="0 0 6 7"><path d="M0 0 V7 L6 3.5 Z" fill="#ddd"/></svg>
<div class="t" style="left:1689px;top:696.0px;font-size:7.2px;color:#999">降噪</div>
<div class="t" style="left:1647px;top:696.0px;font-size:7.2px;color:#e4e4e4;width:200px;text-align:right;-webkit-text-stroke:0.25px #e4e4e4">1.00</div>
<div class="a" style="left:1896px;top:476px;width:268px;height:344px;background:#353535;border-radius:6px;box-shadow:0 0 6px rgba(0,0,0,.25)"></div>
<div class="a" style="left:1896px;top:476px;width:268px;height:18px;background:#313131;border-radius:6px 6px 0 0;border-bottom:1px solid #2c2c2c"></div>
<div class="a" style="left:1902px;top:482px;width:6px;height:6px;background:#777;border-radius:50%"></div>
<div class="t" style="left:1914px;top:481px;font-size:8.4px;color:#a2a2a2">预览图像</div>
<div class="a" style="left:2144px;top:463px;width:19px;height:11px;background:#0b170c;border-radius:3px"></div>
<div class="t" style="left:2144px;top:465px;width:19px;text-align:center;font-size:7.6px;color:#fff;font-weight:bold;letter-spacing:-0.4px">#14</div>
<div class="a" style="left:1898.5px;top:498.5px;width:5px;height:5px;background:#64b5f6"></div>
<svg class="a" style="left:1896px;top:564px;" width="268" height="201" viewBox="0 0 268 201"><defs>
<linearGradient id="pbg" x1="0" y1="0" x2="1" y2="1"><stop offset="0" stop-color="#c7ab98"/><stop offset=".25" stop-color="#e2cdbb"/><stop offset=".55" stop-color="#f1e5d8"/><stop offset="1" stop-color="#eadbcb"/></linearGradient>
<linearGradient id="pbt" x1="0" y1="0" x2="0" y2="1"><stop offset="0" stop-color="#5cc0cc"/><stop offset=".5" stop-color="#2a93a8"/><stop offset="1" stop-color="#66c8d4"/></linearGradient>
<linearGradient id="pst" x1="0" y1="0" x2="0" y2="1"><stop offset="0" stop-color="#cfc2b4"/><stop offset="1" stop-color="#a8988a"/></linearGradient>
<linearGradient id="psil" x1="0" y1="0" x2="1" y2="0"><stop offset="0" stop-color="#607080"/><stop offset=".4" stop-color="#e8eef2"/><stop offset=".7" stop-color="#8898a8"/><stop offset="1" stop-color="#506070"/></linearGradient>
</defs>
<rect width="268" height="201" fill="url(#pbg)"/>
<path d="M0 0 H140 Q60 40 0 130 Z" fill="#b89a88" opacity=".22"/>
<path d="M152.0 173.0 L128.0 128.0 L95.0 100.0 L60.0 80.0 L28.0 64.0" fill="none" stroke="#4a3626" stroke-width="1.4" stroke-linejoin="round"/><path d="M159.0 133.0 L130.0 122.0 L112.0 112.0 L118.0 85.0 L138.0 51.0" fill="none" stroke="#4a3626" stroke-width="1.4" stroke-linejoin="round"/><path d="M234.0 152.0 L248.0 120.0 L240.0 90.0 L262.0 55.0 L267.0 5.0" fill="none" stroke="#4a3626" stroke-width="1.8" stroke-linejoin="round"/><path d="M248.0 110.0 L225.0 75.0 L195.0 48.0" fill="none" stroke="#4a3626" stroke-width="1.4" stroke-linejoin="round"/>
<g><ellipse cx="153.0" cy="157.9" rx="9.5" ry="2.5" transform="rotate(-68 153.0 157.9)" fill="#2f6a24"/><ellipse cx="133.2" cy="154.7" rx="9.5" ry="2.5" transform="rotate(-168 133.2 154.7)" fill="#2f6a24"/><ellipse cx="141.6" cy="136.5" rx="9.5" ry="2.5" transform="rotate(-68 141.6 136.5)" fill="#2f6a24"/><ellipse cx="121.7" cy="133.3" rx="9.5" ry="2.5" transform="rotate(-168 121.7 133.3)" fill="#2f6a24"/><ellipse cx="125.2" cy="115.1" rx="9.5" ry="2.5" transform="rotate(-90 125.2 115.1)" fill="#2f6a24"/><ellipse cx="105.6" cy="119.5" rx="9.5" ry="2.5" transform="rotate(-190 105.6 119.5)" fill="#2f6a24"/><ellipse cx="106.6" cy="99.4" rx="9.5" ry="2.5" transform="rotate(-90 106.6 99.4)" fill="#2f6a24"/><ellipse cx="87.0" cy="103.7" rx="9.5" ry="2.5" transform="rotate(-190 87.0 103.7)" fill="#2f6a24"/><ellipse cx="85.2" cy="85.2" rx="9.5" ry="2.5" transform="rotate(-100 85.2 85.2)" fill="#2f6a24"/><ellipse cx="66.7" cy="93.0" rx="9.5" ry="2.5" transform="rotate(-200 66.7 93.0)" fill="#2f6a24"/><ellipse cx="64.1" cy="73.1" rx="9.5" ry="2.5" transform="rotate(-100 64.1 73.1)" fill="#2f6a24"/><ellipse cx="45.6" cy="81.8" rx="9.5" ry="2.5" transform="rotate(-203 45.6 81.8)" fill="#2f6a24"/><ellipse cx="41.9" cy="62.0" rx="9.5" ry="2.5" transform="rotate(-103 41.9 62.0)" fill="#2f6a24"/><ellipse cx="23.9" cy="70.9" rx="9.5" ry="2.5" transform="rotate(-203 23.9 70.9)" fill="#2f6a24"/><ellipse cx="125.6" cy="111.5" rx="9.0" ry="2.5" transform="rotate(-106 125.6 111.5)" fill="#2f6a24"/><ellipse cx="107.2" cy="117.4" rx="9.0" ry="2.5" transform="rotate(-196 107.2 117.4)" fill="#2f6a24"/><ellipse cx="122.0" cy="99.1" rx="9.0" ry="2.5" transform="rotate(-32 122.0 99.1)" fill="#2f6a24"/><ellipse cx="111.2" cy="83.2" rx="9.0" ry="2.5" transform="rotate(-122 111.2 83.2)" fill="#2f6a24"/><ellipse cx="130.9" cy="76.9" rx="9.0" ry="2.5" transform="rotate(-15 130.9 76.9)" fill="#2f6a24"/><ellipse cx="125.5" cy="58.5" rx="9.0" ry="2.5" transform="rotate(-105 125.5 58.5)" fill="#2f6a24"/><ellipse cx="144.2" cy="54.2" rx="9.0" ry="2.5" transform="rotate(-15 144.2 54.2)" fill="#2f6a24"/><ellipse cx="237.3" cy="109.6" rx="8.5" ry="2.4" transform="rotate(-160 237.3 109.6)" fill="#2f6a24"/><ellipse cx="249.0" cy="93.9" rx="8.5" ry="2.4" transform="rotate(-50 249.0 93.9)" fill="#2f6a24"/><ellipse cx="236.7" cy="80.8" rx="8.5" ry="2.4" transform="rotate(-113 236.7 80.8)" fill="#2f6a24"/><ellipse cx="256.2" cy="78.7" rx="8.5" ry="2.4" transform="rotate(-3 256.2 78.7)" fill="#2f6a24"/><ellipse cx="249.6" cy="60.3" rx="8.5" ry="2.4" transform="rotate(-113 249.6 60.3)" fill="#2f6a24"/><ellipse cx="269.1" cy="58.2" rx="8.5" ry="2.4" transform="rotate(-3 269.1 58.2)" fill="#2f6a24"/><ellipse cx="255.7" cy="41.1" rx="8.5" ry="2.4" transform="rotate(-139 255.7 41.1)" fill="#2f6a24"/><ellipse cx="272.1" cy="30.6" rx="8.5" ry="2.4" transform="rotate(-29 272.1 30.6)" fill="#2f6a24"/><ellipse cx="258.1" cy="17.0" rx="8.5" ry="2.4" transform="rotate(-139 258.1 17.0)" fill="#2f6a24"/><ellipse cx="274.6" cy="6.5" rx="8.5" ry="2.4" transform="rotate(-29 274.6 6.5)" fill="#2f6a24"/><ellipse cx="247.9" cy="96.7" rx="8.5" ry="2.4" transform="rotate(-73 247.9 96.7)" fill="#2f6a24"/><ellipse cx="230.2" cy="96.0" rx="8.5" ry="2.4" transform="rotate(-173 230.2 96.0)" fill="#2f6a24"/><ellipse cx="236.6" cy="79.6" rx="8.5" ry="2.4" transform="rotate(-73 236.6 79.6)" fill="#2f6a24"/><ellipse cx="219.0" cy="78.8" rx="8.5" ry="2.4" transform="rotate(-173 219.0 78.8)" fill="#2f6a24"/><ellipse cx="222.1" cy="62.7" rx="8.5" ry="2.4" transform="rotate(-88 222.1 62.7)" fill="#2f6a24"/><ellipse cx="204.8" cy="66.5" rx="8.5" ry="2.4" transform="rotate(-188 204.8 66.5)" fill="#2f6a24"/><ellipse cx="206.8" cy="49.0" rx="8.5" ry="2.4" transform="rotate(-88 206.8 49.0)" fill="#2f6a24"/><ellipse cx="189.6" cy="52.7" rx="8.5" ry="2.4" transform="rotate(-188 189.6 52.7)" fill="#2f6a24"/></g>
<path d="M106 201 Q108 182 135 177 Q190 170 245 176 Q268 180 268 190 V201 Z" fill="url(#pst)"/>
<path d="M206 165 Q212 148 232 150 Q250 160 255 180 Q230 182 212 176 Z" fill="#3f8f2a"/>
<rect x="160" y="74" width="37" height="109" rx="3" fill="url(#pbt)"/>
<rect x="164" y="80" width="29" height="95" rx="8" fill="#3aa0b4" opacity=".6"/>
<rect x="166" y="56" width="26" height="18" fill="url(#psil)"/>
<path d="M173 56 V44 Q173 38 179.5 38 Q186 38 186 44 V56 Z" fill="#f2f4f6"/>
</svg>
<div class="a" style="left:2326px;top:323px;width:190px;height:1069px;background:#353535;border-radius:8px 0 0 0;box-shadow:0 0 8px rgba(0,0,0,.5)"></div>
<svg class="a" style="left:2336px;top:336px;" width="6" height="14" viewBox="0 0 6 14"><g fill="#aaa"><rect x="0" y="0" width="2" height="2"/><rect x="4" y="0" width="2" height="2"/><rect x="0" y="6" width="2" height="2"/><rect x="4" y="6" width="2" height="2"/><rect x="0" y="12" width="2" height="2"/><rect x="4" y="12" width="2" height="2"/></g></svg>
<div class="t" style="left:2360px;top:336px;font-size:16px;color:#999">队列大小:1</div>
<svg class="a" style="left:2452px;top:336px;" width="15" height="15" viewBox="0 0 15 15"><g fill="#b0a8c8"><circle cx="7.5" cy="7.5" r="4.6"/><g stroke="#b0a8c8" stroke-width="2.4"><path d="M7.5 0.5 V14.5 M0.5 7.5 H14.5 M2.5 2.5 L12.5 12.5 M12.5 2.5 L2.5 12.5"/></g></g><circle cx="7.5" cy="7.5" r="2" fill="#353535"/></svg>
<svg class="a" style="left:2473px;top:335px;" width="16" height="15" viewBox="0 0 16 15"><rect x="0.5" y="0.5" width="15" height="14" fill="#c88a40"/><rect x="2" y="2" width="12" height="11" fill="#5ab4e8"/><circle cx="10" cy="5" r="1.6" fill="#ffd040"/><path d="M2 11 L6 7 L9 10 L11 8 L14 11 V13 H2 Z" fill="#4aa84a"/></svg>
<svg class="a" style="left:2494px;top:334px;" width="12" height="12" viewBox="0 0 12 12"><path d="M1.5 1.5 L10.5 10.5 M10.5 1.5 L1.5 10.5" stroke="#eee" stroke-width="2.2"/></svg>
<div class="a" style="left:2337px;top:361px;width:169px;height:34px;background:#222;border:2px solid #4e4e4e;border-radius:8px;"></div>
<div class="t" style="left:2337px;top:368.2px;width:169px;text-align:center;font-size:19.6px;color:#ddd;line-height:19.6px;-webkit-text-stroke:0.35px #ddd">添加提示词队列</div>
<div class="a" style="left:2337px;top:408px;width:168px;height:106px;border:2px solid #4a4a4a;border-radius:8px"></div>
<div class="a" style="left:2346px;top:414px;width:150px;height:18px;background:#008000"></div>
<div class="t" style="left:2346px;top:416px;width:150px;text-align:center;font-size:14px;color:#eee;font-weight:bold">100%</div>
<div class="t" style="left:2337px;top:439px;width:50px;text-align:right;font-size:11px;color:#999">CPU</div>
<div class="a" style="left:2390px;top:438px;width:105px;height:12px;background:#222"></div>
<div class="t" style="left:2390px;top:440px;width:105px;text-align:center;font-size:11px;color:#eee;font-weight:bold">0%</div>
<div class="t" style="left:2337px;top:453px;width:50px;text-align:right;font-size:11px;color:#999">RAM</div>
<div class="a" style="left:2390px;top:452px;width:105px;height:12px;background:#222"></div>
<div class="a" style="left:2390px;top:452px;width:57.75000000000001px;height:12px;background:#0c5a0c"></div>
<div class="t" style="left:2390px;top:454px;width:105px;text-align:center;font-size:11px;color:#eee;font-weight:bold">55%</div>
<div class="t" style="left:2337px;top:467px;width:50px;text-align:right;font-size:11px;color:#999">GPU</div>
<div class="a" style="left:2390px;top:466px;width:105px;height:12px;background:#222"></div>
<div class="a" style="left:2390px;top:466px;width:2.1px;height:12px;background:#1e6fd0"></div>
<div class="t" style="left:2390px;top:468px;width:105px;text-align:center;font-size:11px;color:#eee;font-weight:bold">2%</div>
<div class="t" style="left:2337px;top:481px;width:50px;text-align:right;font-size:11px;color:#999">VRAM</div>
<div class="a" style="left:2390px;top:480px;width:105px;height:12px;background:#222"></div>
<div class="a" style="left:2390px;top:480px;width:66.15px;height:12px;background:#1e6fd0"></div>
<div class="t" style="left:2390px;top:482px;width:105px;text-align:center;font-size:11px;color:#eee;font-weight:bold">63%</div>
<div class="t" style="left:2337px;top:495px;width:50px;text-align:right;font-size:11px;color:#999">Temp</div>
<div class="a" style="left:2390px;top:494px;width:105px;height:12px;background:#222"></div>
<div class="a" style="left:2390px;top:494px;width:49.349999999999994px;height:12px;background:#6b7800"></div>
<div class="t" style="left:2390px;top:496px;width:105px;text-align:center;font-size:11px;color:#eee;font-weight:bold">47°</div>
<div class="t" style="left:2381px;top:523px;font-size:15px;color:#999">更多选项</div>
<div class="a" style="left:2445px;top:524px;width:12px;height:12px;border:1.5px solid #aaa;border-radius:2px"></div>
<div class="a" style="left:2337px;top:544px;width:82px;height:19px;background:#222;border:2px solid #4e4e4e;border-radius:8px;border-width:1.5px;border-radius:9px"></div>
<div class="t" style="left:2337px;top:548.5px;width:82px;text-align:center;font-size:10px;color:#ddd;line-height:10px;-webkit-text-stroke:0.2px #ddd">执行队列</div>
<div class="a" style="left:2422px;top:544px;width:83px;height:19px;background:#222;border:2px solid #4e4e4e;border-radius:8px;border-width:1.5px;border-radius:9px"></div>
<div class="t" style="left:2422px;top:548.5px;width:83px;text-align:center;font-size:10px;color:#ddd;line-height:10px;-webkit-text-stroke:0.2px #ddd">显示队列</div>
<div class="a" style="left:2380px;top:568px;width:83px;height:18px;background:#222;border:2px solid #4e4e4e;border-radius:8px;border-width:1.5px;border-radius:9px"></div>
<div class="t" style="left:2380px;top:572.0px;width:83px;text-align:center;font-size:10px;color:#ddd;line-height:10px;-webkit-text-stroke:0.2px #ddd">关闭</div>
<div class="a" style="left:2339px;top:598px;width:164px;height:167px;border:2px solid #4a4a4a;background:#353535"></div>
<div class="t" style="left:2339px;top:605px;width:164px;text-align:center;font-size:15px;color:#aaa">历史记录</div>
<div class="a" style="left:2341px;top:627px;width:160px;height:100px;background:#222"></div>
<div class="a" style="left:2496px;top:628px;width:4px;height:18px;background:#111;border-radius:2px"></div>
<div class="t" style="left:2300px;top:636px;width:92px;text-align:right;font-size:15px;color:#aaa">20:</div>
<div class="a" style="left:2395px;top:634px;width:34px;height:21px;background:#222;border:2px solid #4e4e4e;border-radius:8px;border-width:1.5px;border-radius:8px"></div>
<div class="t" style="left:2395px;top:639.0px;width:34px;text-align:center;font-size:11px;color:#ddd;line-height:11px;font-weight:bold">加载</div>
<div class="a" style="left:2431px;top:634px;width:35px;height:21px;background:#222;border:2px solid #4e4e4e;border-radius:8px;border-width:1.5px;border-radius:8px"></div>
<div class="t" style="left:2431px;top:639.0px;width:35px;text-align:center;font-size:11px;color:#ddd;line-height:11px;font-weight:bold">删除</div>
<div class="t" style="left:2300px;top:659px;width:92px;text-align:right;font-size:15px;color:#aaa">19:</div>
<div class="a" style="left:2395px;top:657px;width:34px;height:21px;background:#222;border:2px solid #4e4e4e;border-radius:8px;border-width:1.5px;border-radius:8px"></div>
<div class="t" style="left:2395px;top:662.0px;width:34px;text-align:center;font-size:11px;color:#ddd;line-height:11px;font-weight:bold">加载</div>
<div class="a" style="left:2431px;top:657px;width:35px;height:21px;background:#222;border:2px solid #4e4e4e;border-radius:8px;border-width:1.5px;border-radius:8px"></div>
<div class="t" style="left:2431px;top:662.0px;width:35px;text-align:center;font-size:11px;color:#ddd;line-height:11px;font-weight:bold">删除</div>
<div class="t" style="left:2300px;top:682px;width:92px;text-align:right;font-size:15px;color:#aaa">18:</div>
<div class="a" style="left:2395px;top:680px;width:34px;height:21px;background:#222;border:2px solid #4e4e4e;border-radius:8px;border-width:1.5px;border-radius:8px"></div>
<div class="t" style="left:2395px;top:685.0px;width:34px;text-align:center;font-size:11px;color:#ddd;line-height:11px;font-weight:bold">加载</div>
<div class="a" style="left:2431px;top:680px;width:35px;height:21px;background:#222;border:2px solid #4e4e4e;border-radius:8px;border-width:1.5px;border-radius:8px"></div>
<div class="t" style="left:2431px;top:685.0px;width:35px;text-align:center;font-size:11px;color:#ddd;line-height:11px;font-weight:bold">删除</div>
<div class="t" style="left:2300px;top:705px;width:92px;text-align:right;font-size:15px;color:#aaa">17:</div>
<div class="a" style="left:2395px;top:703px;width:34px;height:21px;background:#222;border:2px solid #4e4e4e;border-radius:8px;border-width:1.5px;border-radius:8px"></div>
<div class="t" style="left:2395px;top:708.0px;width:34px;text-align:center;font-size:11px;color:#ddd;line-height:11px;font-weight:bold">加载</div>
<div class="a" style="left:2431px;top:703px;width:35px;height:21px;background:#222;border:2px solid #4e4e4e;border-radius:8px;border-width:1.5px;border-radius:8px"></div>
<div class="t" style="left:2431px;top:708.0px;width:35px;text-align:center;font-size:11px;color:#ddd;line-height:11px;font-weight:bold">删除</div>
<div class="a" style="left:2396px;top:726px;width:32px;height:1px;background:#4a4a4a"></div>
<div class="a" style="left:2432px;top:726px;width:33px;height:1px;background:#4a4a4a"></div>
<div class="a" style="left:2367px;top:735px;width:63px;height:22px;background:#222;border:2px solid #4e4e4e;border-radius:8px;border-width:1.5px;border-radius:8px"></div>
<div class="t" style="left:2367px;top:740.5px;width:63px;text-align:center;font-size:11px;color:#ddd;line-height:11px;font-weight:bold">清除历史</div>
<div class="a" style="left:2436px;top:735px;width:40px;height:22px;background:#222;border:2px solid #4e4e4e;border-radius:8px;border-width:1.5px;border-radius:8px"></div>
<div class="t" style="left:2436px;top:740.5px;width:40px;text-align:center;font-size:11px;color:#ddd;line-height:11px;font-weight:bold">刷新</div>
<div class="a" style="left:2337px;top:778px;width:169px;height:34px;background:#222;border:2px solid #4e4e4e;border-radius:8px;"></div>
<div class="t" style="left:2337px;top:785.0px;width:169px;text-align:center;font-size:20px;color:#ddd;line-height:20px;-webkit-text-stroke:0.35px #ddd">保存</div>
<div class="a" style="left:2480px;top:780px;width:24px;height:30px;background:#333;border-radius:0 6px 6px 0"></div>
<svg class="a" style="left:2487px;top:790px;" width="10" height="9" viewBox="0 0 10 9"><path d="M0 0 H10 L5 8 Z" fill="#ddd"/></svg>
<div class="a" style="left:2337px;top:815px;width:169px;height:34px;background:#222;border:2px solid #4e4e4e;border-radius:8px;"></div>
<div class="t" style="left:2337px;top:822.0px;width:169px;text-align:center;font-size:20px;color:#ddd;line-height:20px;-webkit-text-stroke:0.35px #ddd">加载</div>
<div class="a" style="left:2337px;top:852px;width:169px;height:34px;background:#222;border:2px solid #4e4e4e;border-radius:8px;"></div>
<div class="t" style="left:2337px;top:859.0px;width:169px;text-align:center;font-size:20px;color:#ddd;line-height:20px;-webkit-text-stroke:0.35px #ddd">刷新</div>
<div class="a" style="left:2337px;top:889px;width:169px;height:34px;background:#222;border:2px solid #4e4e4e;border-radius:8px;"></div>
<div class="t" style="left:2337px;top:896.0px;width:169px;text-align:center;font-size:20px;color:#ddd;line-height:20px;-webkit-text-stroke:0.35px #ddd">剪贴空间</div>
<div class="a" style="left:2337px;top:926px;width:169px;height:34px;background:#222;border:2px solid #4e4e4e;border-radius:8px;"></div>
<div class="t" style="left:2337px;top:933.0px;width:169px;text-align:center;font-size:20px;color:#ddd;line-height:20px;-webkit-text-stroke:0.35px #ddd">清除</div>
<div class="a" style="left:2337px;top:963px;width:169px;height:34px;background:#222;border:2px solid #4e4e4e;border-radius:8px;"></div>
<div class="t" style="left:2337px;top:970.0px;width:169px;text-align:center;font-size:20px;color:#ddd;line-height:20px;-webkit-text-stroke:0.35px #ddd">加载默认</div>
<div class="a" style="left:2337px;top:1000px;width:169px;height:34px;background:#222;border:2px solid #4e4e4e;border-radius:8px;"></div>
<div class="t" style="left:2337px;top:1007.0px;width:169px;text-align:center;font-size:20px;color:#ddd;line-height:20px;-webkit-text-stroke:0.35px #ddd">重置视图</div>
<div class="a" style="left:2337px;top:1054px;width:168px;height:1px;background:#4a4a4a"></div>
<div class="a" style="left:2337px;top:1078px;width:169px;height:33px;background:#222;border:2px solid #4e4e4e;border-radius:8px;"></div>
<div class="t" style="left:2337px;top:1084.5px;width:169px;text-align:center;font-size:20px;color:#ddd;line-height:20px;"></div>
<svg class="a" style="left:2348px;top:1088px;" width="15" height="10" viewBox="0 0 15 10"><path d="M7.5 5 C5 1 1 1 1 5 C1 9 5 9 7.5 5 C10 1 14 1 14 5 C14 9 10 9 7.5 5 Z" fill="none" stroke="#1a9ff0" stroke-width="1.8"/></svg>
<div class="t" style="left:2366px;top:1087px;font-size:13px;color:#ddd;font-weight:bold">Mixlab节点</div>
<div class="a" style="left:2337px;top:1114px;width:169px;height:34px;background:#222;border:2px solid #4e4e4e;border-radius:8px;"></div>
<div class="t" style="left:2337px;top:1121.0px;width:169px;text-align:center;font-size:20px;color:#ddd;line-height:20px;-webkit-text-stroke:0.35px #ddd">切换语言</div>
<div class="a" style="left:2337px;top:1168px;width:168px;height:2px;background:#ddd"></div>
<div class="a" style="left:2337px;top:1193px;width:169px;height:34px;background:#222;border:2px solid #4e4e4e;border-radius:8px;"></div>
<div class="t" style="left:2337px;top:1200.0px;width:169px;text-align:center;font-size:20px;color:#ddd;line-height:20px;-webkit-text-stroke:0.35px #ddd">管理器</div>
<div class="a" style="left:2337px;top:1230px;width:169px;height:34px;background:linear-gradient(90deg,#06c8f8,#8cf8a0);border:2px solid #4e4e4e;border-radius:8px"></div>
<div class="t" style="left:2337px;top:1237px;width:169px;text-align:center;font-size:20px;color:#111">分享</div>
<svg class="a" style="left:2365px;top:1274px;" width="112" height="118" viewBox="0 0 112 118"><defs><linearGradient id="tbg" x1="0" y1="0" x2="1" y2="1"><stop offset="0" stop-color="#c9ab96"/><stop offset=".35" stop-color="#ecdccb"/><stop offset=".7" stop-color="#f3e6d9"/><stop offset="1" stop-color="#eadac9"/></linearGradient>
<linearGradient id="tbt" x1="0" y1="0" x2="0" y2="1"><stop offset="0" stop-color="#4ab4cc"/><stop offset=".5" stop-color="#2290b0"/><stop offset="1" stop-color="#70c4dc"/></linearGradient>
<linearGradient id="tsil" x1="0" y1="0" x2="1" y2="0"><stop offset="0" stop-color="#607080"/><stop offset=".4" stop-color="#e8eef2"/><stop offset=".7" stop-color="#8898a8"/><stop offset="1" stop-color="#506070"/></linearGradient></defs>
<rect width="112" height="118" fill="url(#tbg)"/>
<path d="M112.0 70.0 L95.0 55.0 L78.0 40.0 L62.0 38.0" fill="none" stroke="#4a3626" stroke-width="1.2" stroke-linejoin="round"/><path d="M112.0 100.0 L92.0 88.0 L70.0 80.0 L55.0 80.0" fill="none" stroke="#4a3626" stroke-width="1.2" stroke-linejoin="round"/><path d="M70.0 118.0 L95.0 105.0 L112.0 85.0" fill="none" stroke="#3a2a1a" stroke-width="1.6" stroke-linejoin="round"/><path d="M100.0 60.0 L92.0 30.0 L85.0 18.0" fill="none" stroke="#4a3626" stroke-width="1.1" stroke-linejoin="round"/>
<g><ellipse cx="110.2" cy="60.6" rx="6.5" ry="2.0" transform="rotate(-84 110.2 60.6)" fill="#357a26"/><ellipse cx="97.4" cy="64.9" rx="6.5" ry="2.0" transform="rotate(-194 97.4 64.9)" fill="#357a26"/><ellipse cx="100.0" cy="51.6" rx="6.5" ry="2.0" transform="rotate(-84 100.0 51.6)" fill="#357a26"/><ellipse cx="87.1" cy="55.9" rx="6.5" ry="2.0" transform="rotate(-194 87.1 55.9)" fill="#357a26"/><ellipse cx="89.8" cy="42.6" rx="6.5" ry="2.0" transform="rotate(-84 89.8 42.6)" fill="#357a26"/><ellipse cx="76.9" cy="46.8" rx="6.5" ry="2.0" transform="rotate(-194 76.9 46.8)" fill="#357a26"/><ellipse cx="79.5" cy="33.5" rx="6.5" ry="2.0" transform="rotate(-84 79.5 33.5)" fill="#357a26"/><ellipse cx="67.4" cy="44.6" rx="6.5" ry="2.0" transform="rotate(-228 67.4 44.6)" fill="#357a26"/><ellipse cx="62.0" cy="32.1" rx="6.5" ry="2.0" transform="rotate(-118 62.0 32.1)" fill="#357a26"/><ellipse cx="108.6" cy="91.1" rx="6.5" ry="2.0" transform="rotate(-94 108.6 91.1)" fill="#3a8a2a"/><ellipse cx="96.6" cy="97.6" rx="6.5" ry="2.0" transform="rotate(-204 96.6 97.6)" fill="#3a8a2a"/><ellipse cx="96.8" cy="84.0" rx="6.5" ry="2.0" transform="rotate(-94 96.8 84.0)" fill="#3a8a2a"/><ellipse cx="85.5" cy="91.9" rx="6.5" ry="2.0" transform="rotate(-215 85.5 91.9)" fill="#3a8a2a"/><ellipse cx="83.1" cy="78.5" rx="6.5" ry="2.0" transform="rotate(-105 83.1 78.5)" fill="#3a8a2a"/><ellipse cx="72.6" cy="87.2" rx="6.5" ry="2.0" transform="rotate(-215 72.6 87.2)" fill="#3a8a2a"/><ellipse cx="70.2" cy="73.8" rx="6.5" ry="2.0" transform="rotate(-105 70.2 73.8)" fill="#3a8a2a"/><ellipse cx="61.2" cy="85.9" rx="6.5" ry="2.0" transform="rotate(125 61.2 85.9)" fill="#3a8a2a"/><ellipse cx="54.3" cy="74.1" rx="6.5" ry="2.0" transform="rotate(235 54.3 74.1)" fill="#3a8a2a"/><ellipse cx="80.1" cy="118.4" rx="6.0" ry="2.0" transform="rotate(23 80.1 118.4)" fill="#2f7022"/><ellipse cx="83.5" cy="105.3" rx="6.0" ry="2.0" transform="rotate(-77 83.5 105.3)" fill="#2f7022"/><ellipse cx="96.2" cy="110.1" rx="6.0" ry="2.0" transform="rotate(23 96.2 110.1)" fill="#2f7022"/><ellipse cx="96.2" cy="95.8" rx="6.0" ry="2.0" transform="rotate(-100 96.2 95.8)" fill="#2f7022"/><ellipse cx="109.8" cy="95.4" rx="6.0" ry="2.0" transform="rotate(0 109.8 95.4)" fill="#2f7022"/><ellipse cx="108.0" cy="81.9" rx="6.0" ry="2.0" transform="rotate(-100 108.0 81.9)" fill="#2f7022"/><ellipse cx="102.8" cy="51.0" rx="6.0" ry="2.0" transform="rotate(-55 102.8 51.0)" fill="#3a8a2a"/><ellipse cx="91.1" cy="46.3" rx="6.0" ry="2.0" transform="rotate(-155 91.1 46.3)" fill="#3a8a2a"/><ellipse cx="99.0" cy="36.5" rx="6.0" ry="2.0" transform="rotate(-55 99.0 36.5)" fill="#3a8a2a"/><ellipse cx="87.3" cy="31.9" rx="6.0" ry="2.0" transform="rotate(-155 87.3 31.9)" fill="#3a8a2a"/><ellipse cx="92.9" cy="21.5" rx="6.0" ry="2.0" transform="rotate(-70 92.9 21.5)" fill="#3a8a2a"/><ellipse cx="80.4" cy="20.1" rx="6.0" ry="2.0" transform="rotate(-170 80.4 20.1)" fill="#3a8a2a"/></g>
<rect x="27" y="61" width="25" height="57" fill="url(#tbt)"/>
<rect x="32.5" y="50" width="15" height="11" fill="url(#tsil)"/>
<path d="M35.5 50 V42 Q35.5 38 40 38 Q44.5 38 44.5 42 V50 Z" fill="#f2f4f6"/></svg>
<div class="a" style="left:188px;top:429px;width:1048px;height:880px;background:#f0f0f0;border-radius:8px;box-shadow:0 0 0 1px rgba(80,80,80,.6),0 4px 18px rgba(0,0,0,.45);overflow:hidden"></div>
<div class="a" style="left:188px;top:429px;width:1048px;height:30px;background:linear-gradient(90deg,#e8f3f0,#e2f6f2);border-radius:8px 8px 0 0"></div>
<svg class="a" style="left:196px;top:436px;" width="16" height="14" viewBox="0 0 16 14"><rect x="0.5" y="0.5" width="15" height="13" fill="#e8eef0" stroke="#8a9aa0" stroke-width="1"/><rect x="2" y="3" width="6" height="9" fill="#3a8a70"/><rect x="9" y="3" width="5" height="9" fill="#d8e4ea"/><rect x="12" y="2" width="2" height="3" fill="#5090c0"/></svg>
<div class="t" style="left:217px;top:439px;font-size:12px;letter-spacing:-0.15px;color:#1a1a1a">PyQt5 Image Canvas</div>
<div class="t" style="left:1163px;top:436px;font-size:14px;color:#222">?</div>
<svg class="a" style="left:1207px;top:438px;" width="12" height="12" viewBox="0 0 12 12"><path d="M1 1 L11 11 M11 1 L1 11" stroke="#222" stroke-width="1.1"/></svg>
<div class="a" style="left:199px;top:470px;width:1026px;height:769px;background:#fff;border:1px solid #111"></div>
<svg class="a" style="left:862px;top:597px;" width="145" height="560" viewBox="0 0 145 560"><defs>
<linearGradient id="bo" x1="0" y1="0" x2="0" y2="1"><stop offset="0" stop-color="#1a6a90"/><stop offset=".35" stop-color="#2584b2"/><stop offset=".6" stop-color="#7cc2e0"/><stop offset=".8" stop-color="#b8e0f0"/><stop offset="1" stop-color="#9ccfe4"/></linearGradient>
<linearGradient id="bi" x1="0" y1="0" x2="0" y2="1"><stop offset="0" stop-color="#1b6e9e"/><stop offset=".45" stop-color="#2f90c4"/><stop offset=".75" stop-color="#a4d8ee"/><stop offset=".9" stop-color="#e2f4fa"/><stop offset="1" stop-color="#3a9ed0"/></linearGradient>
<linearGradient id="sil" x1="0" y1="0" x2="1" y2="0"><stop offset="0" stop-color="#4a5868"/><stop offset=".2" stop-color="#b8c4d0"/><stop offset=".38" stop-color="#f4f6f8"/><stop offset=".55" stop-color="#7a8898"/><stop offset=".8" stop-color="#d8dee4"/><stop offset="1" stop-color="#3a4858"/></linearGradient>
<linearGradient id="bulb" x1="0" y1="0" x2="1" y2="0"><stop offset="0" stop-color="#d0d6dc"/><stop offset=".4" stop-color="#ffffff"/><stop offset="1" stop-color="#c0c8d0"/></linearGradient>
<radialGradient id="cl" cx=".5" cy=".5" r=".5"><stop offset="0" stop-color="#fff"/><stop offset=".55" stop-color="#f4f8fa" stop-opacity=".85"/><stop offset="1" stop-color="#fff" stop-opacity="0"/></radialGradient>
<radialGradient id="clg" cx=".5" cy=".5" r=".5"><stop offset="0" stop-color="#d8e4ea"/><stop offset=".6" stop-color="#b8ccd8" stop-opacity=".7"/><stop offset="1" stop-color="#9ab" stop-opacity="0"/></radialGradient>
</defs>
<path d="M5 137 Q5 135 8 135 L138 137 Q141 137 141 140 L142 548 Q142 554 136 554 L10 550 Q4 550 4 544 Z" fill="url(#bo)"/>
<path d="M5 137 L141 139" stroke="#155a7a" stroke-width="3"/>
<rect x="6" y="140" width="6" height="405" fill="#e8f6fb" opacity=".55"/>
<rect x="132" y="142" width="6" height="405" fill="#e8f6fb" opacity=".3"/>
<rect x="14" y="144" width="120" height="356" rx="24" fill="url(#bi)"/>
<path d="M17 482 Q22 499 42 499 H106 Q126 499 131 482" fill="none" stroke="#2a90c8" stroke-width="6" opacity=".75"/>
<rect x="28" y="63" width="90" height="72" fill="url(#sil)"/>
<rect x="28" y="63" width="90" height="3" fill="#8a96a4"/>
<path d="M54 64 V22 Q54 1 76 1 Q98 1 98 22 V64 Z" fill="url(#bulb)"/>
<path d="M73 180 V440 M80 180 V440" stroke="#8ccbe4" stroke-width="1.2" opacity=".55"/>
<text x="76" y="247" font-size="13" letter-spacing="-0.4" fill="#e8f6ff" text-anchor="middle" font-family="Liberation Sans">CLOUDS</text>
<text x="76" y="268" font-size="13" letter-spacing="-0.4" fill="#e8f6ff" text-anchor="middle" font-family="Liberation Sans">AMPLE</text>
<text x="74" y="465" font-size="5.5" fill="#445" text-anchor="middle" font-family="Liberation Sans">100ML</text>
<ellipse cx="112" cy="180" rx="34" ry="40" fill="url(#clg)" opacity=".9"/>
<ellipse cx="118" cy="430" rx="30" ry="36" fill="url(#cl)"/>
<ellipse cx="96" cy="462" rx="28" ry="18" fill="url(#cl)"/>
<ellipse cx="120" cy="505" rx="26" ry="30" fill="url(#cl)" opacity=".85"/>
<ellipse cx="72" cy="546" rx="64" ry="8" fill="#3a7aa0" opacity=".45"/>
<ellipse cx="50" cy="545" rx="36" ry="7" fill="url(#cl)" opacity=".8"/>
<ellipse cx="112" cy="546" rx="28" ry="8" fill="url(#cl)" opacity=".7"/>
<ellipse cx="50" cy="376" rx="6" ry="4" fill="#5ab0dc" opacity=".8"/><ellipse cx="75" cy="387" rx="4" ry="2.5" fill="#5ab0dc" opacity=".8"/><ellipse cx="96" cy="345" rx="5" ry="3.5" fill="#3a98cc" opacity=".8"/>
</svg>
<div class="a" style="left:199px;top:1247px;width:457px;height:20px;background:#fff;border-bottom:1px solid #777;border-radius:2px"></div>
<div class="t" style="left:202px;top:1252px;font-size:11px;color:#111">1024</div>
<div class="a" style="left:664px;top:1247px;width:456px;height:20px;background:#fff;border-bottom:1px solid #777;border-radius:2px"></div>
<div class="t" style="left:666px;top:1252px;font-size:11px;color:#111">768</div>
<div class="a" style="left:1127px;top:1247px;width:96px;height:20px;background:#fbfbfb;border:1px solid #d0d0d0;border-radius:3px"></div>
<div class="t" style="left:1127px;top:1253px;width:96px;text-align:center;font-size:11px;color:#111;font-family:'Liberation Mono',monospace;letter-spacing:-0.6px">Set Canvas Size</div>
<div class="a" style="left:200px;top:1276px;width:1024px;height:21px;background:#fbfbfb;border:1.5px solid #2a78d0;border-radius:4px"></div>
<div class="t" style="left:200px;top:1282px;width:1024px;text-align:center;font-size:11px;color:#111;font-family:'Liberation Mono',monospace;letter-spacing:-0.6px">Save and Close</div>
<div class="a" style="left:0px;top:1392px;width:2560px;height:48px;background:#202020;border-top:1px solid #2e2e2e"></div>
<div class="a" style="left:145px;top:1396px;width:40px;height:40px;background:#7a4a4c;border-radius:4px"></div>
<div class="a" style="left:718px;top:1396px;width:39px;height:40px;background:#2c2c2c;border-radius:4px"></div>
<svg class="a" style="left:20px;top:1405px;" width="24" height="24" viewBox="0 0 24 24"><g fill="#3aa0f0"><rect x="0" y="0" width="11" height="11" rx="1"/><rect x="12.5" y="0" width="11" height="11" rx="1"/><rect x="0" y="12.5" width="11" height="11" rx="1"/><rect x="12.5" y="12.5" width="11" height="11" rx="1"/></g></svg>
<svg class="a" style="left:65px;top:1404px;" width="24" height="25" viewBox="0 0 24 25"><circle cx="12" cy="12.5" r="11.5" fill="#f6d40e"/><path d="M10 5 V17 M10 5 L16 7" stroke="#1a8a5a" stroke-width="2.2" fill="none"/><circle cx="8" cy="17" r="2.8" fill="#1a8a5a"/></svg>
<svg class="a" style="left:109px;top:1404px;" width="24" height="25" viewBox="0 0 24 25"><path d="M2 13 Q2 2 13 2 Q23 2 23 11 Q23 15 18 15 H9 Q10 20 16 20 Q20 20 22 18 Q19 24 12 24 Q2 24 2 13Z" fill="#2da6e8"/><path d="M2 13 Q4 6 12 7 Q8 9 8 13" fill="#46d48a"/><circle cx="7" cy="19" r="4.5" fill="#5a3a2a"/></svg>
<svg class="a" style="left:152px;top:1403px;" width="28" height="26" viewBox="0 0 28 26"><ellipse cx="10" cy="10" rx="9.5" ry="8.5" fill="#3ed05a"/><ellipse cx="18" cy="16" rx="9" ry="7.5" fill="#f0f0f0"/><circle cx="7" cy="8" r="1.2" fill="#1a5a2a"/><circle cx="13" cy="8" r="1.2" fill="#1a5a2a"/></svg>
<svg class="a" style="left:196px;top:1404px;" width="26" height="25" viewBox="0 0 26 25"><path d="M1 3 Q1 1 3 1 H9 L12 4 H23 Q25 4 25 6 V22 Q25 24 23 24 H3 Q1 24 1 22 Z" fill="#f0c030"/><rect x="1" y="8" width="24" height="16" rx="1.5" fill="#fad255"/><rect x="7" y="15" width="13" height="8" fill="#1a7ad8"/></svg>
<svg class="a" style="left:241px;top:1405px;" width="23" height="22" viewBox="0 0 23 22"><rect width="23" height="22" rx="3" fill="#001d34"/><text x="3.5" y="16" font-size="12" font-weight="bold" fill="#31a8ff" font-family="Liberation Sans">Ps</text></svg>
<svg class="a" style="left:285px;top:1404px;" width="23" height="23" viewBox="0 0 23 23"><rect width="23" height="23" fill="#e8e000"/><rect x="2.5" y="2.5" width="18" height="18" fill="#111"/><text x="4" y="12" font-size="8.5" font-weight="bold" fill="#fff" font-family="Liberation Sans">PC</text><rect x="4.5" y="15.5" width="6" height="1.5" fill="#fff"/></svg>
<svg class="a" style="left:329px;top:1404px;" width="24" height="24" viewBox="0 0 24 24"><rect width="24" height="24" rx="5" fill="#000"/><path d="M4 7 L20 17 M4 17 L20 7 M4 7 H20 M4 17 H20" stroke="#fff" stroke-width="2.6" fill="none" stroke-linejoin="round"/></svg>
<svg class="a" style="left:681px;top:1404px;" width="24" height="24" viewBox="0 0 24 24"><rect width="24" height="24" rx="5" fill="#000"/><path d="M4 7 L20 17 M4 17 L20 7 M4 7 H20 M4 17 H20" stroke="#fff" stroke-width="2.6" fill="none" stroke-linejoin="round"/></svg>
<svg class="a" style="left:373px;top:1404px;" width="24" height="24" viewBox="0 0 24 24"><defs><linearGradient id="pg" x1="1" y1="0" x2="0" y2="1"><stop offset="0" stop-color="#3ab8f8"/><stop offset=".5" stop-color="#8a5af0"/><stop offset="1" stop-color="#f840a8"/></linearGradient></defs><rect width="24" height="24" rx="6" fill="url(#pg)"/><path d="M5.5 4.5 V19 M8 19 Q10 9 19 5 M10.5 19 Q12.5 12 19 8.5 M13 19 Q15 14 19 12" stroke="#fff" stroke-width="1.5" fill="none"/></svg>
<svg class="a" style="left:417px;top:1404px;" width="24" height="24" viewBox="0 0 24 24"><rect width="24" height="24" rx="4" fill="#3a78c8"/><path d="M0 4 Q0 0 4 0 H16 Q22 6 22 14 V24 H4 Q0 24 0 20 Z" fill="#f0a8c0"/><ellipse cx="12" cy="15" rx="6.5" ry="6" fill="#fbe6e0"/><path d="M7 13 Q9 12 10 14 M14 14 Q15 12 17 13" stroke="#6a4a5a" stroke-width=".8" fill="none"/><ellipse cx="12" cy="18" rx="1.6" ry="1.2" fill="#e86070"/><path d="M5 3 Q12 -1 19 5 L18 11 Q12 6 6 11 Z" fill="#f4b4c8"/><rect x="7" y="21" width="10" height="3" fill="#5a8ad8"/></svg>
<svg class="a" style="left:593px;top:1404px;" width="24" height="24" viewBox="0 0 24 24"><rect width="24" height="24" rx="4" fill="#3a78c8"/><path d="M0 4 Q0 0 4 0 H16 Q22 6 22 14 V24 H4 Q0 24 0 20 Z" fill="#f0a8c0"/><ellipse cx="12" cy="15" rx="6.5" ry="6" fill="#fbe6e0"/><path d="M7 13 Q9 12 10 14 M14 14 Q15 12 17 13" stroke="#6a4a5a" stroke-width=".8" fill="none"/><ellipse cx="12" cy="18" rx="1.6" ry="1.2" fill="#e86070"/><path d="M5 3 Q12 -1 19 5 L18 11 Q12 6 6 11 Z" fill="#f4b4c8"/><rect x="7" y="21" width="10" height="3" fill="#5a8ad8"/></svg>
<svg class="a" style="left:462px;top:1404px;" width="23" height="24" viewBox="0 0 23 24"><defs><radialGradient id="rb" cx=".5" cy=".5" r=".5"><stop offset="0" stop-color="#f03020"/><stop offset=".3" stop-color="#f0d020"/><stop offset=".55" stop-color="#30d040"/><stop offset=".8" stop-color="#2060f0"/><stop offset="1" stop-color="#c020d0"/></radialGradient></defs><ellipse cx="11.5" cy="12" rx="10.5" ry="10" fill="url(#rb)"/><g fill="none" stroke="#8a7a9a" stroke-width="1.4"><path d="M5 2 V10 M5 6 H8 M8 2 V10 M12 2 H16 M14 2 V10 M4 14 H8 M6 14 V22 M12 22 L14 14 L16 22 M13 19 H15"/></g></svg>
<svg class="a" style="left:505px;top:1405px;" width="22" height="21" viewBox="0 0 22 21"><defs><linearGradient id="dk" x1="0" y1="0" x2="0" y2="1"><stop offset="0" stop-color="#3a3a3a"/><stop offset="1" stop-color="#050505"/></linearGradient></defs><rect width="22" height="21" rx="5" fill="url(#dk)"/><rect x="5" y="9" width="12" height="3.5" fill="#f0f0f0" opacity=".9"/></svg>
<svg class="a" style="left:549px;top:1404px;" width="24" height="24" viewBox="0 0 24 24"><rect x="8" y="1" width="16" height="22" rx="2" fill="#2a72d0"/><rect x="10" y="5" width="12" height="2" fill="#8ab8f0"/><rect x="10" y="10" width="12" height="2" fill="#8ab8f0"/><rect x="10" y="15" width="12" height="2" fill="#8ab8f0"/><rect x="0" y="5" width="13" height="14" rx="1.5" fill="#1a4aa8"/><text x="1.5" y="16" font-size="10" font-weight="bold" fill="#fff" font-family="Liberation Sans">W</text></svg>
<svg class="a" style="left:637px;top:1404px;" width="24" height="24" viewBox="0 0 24 24"><circle cx="12" cy="12" r="11" fill="#262626" stroke="#d0d0d0" stroke-width="1.6"/><g fill="none" stroke="#d0d0d0" stroke-width="1.6"><circle cx="12" cy="7" r="3.5"/><circle cx="7.5" cy="15" r="3.5"/><circle cx="16.5" cy="15" r="3.5"/></g></svg>
<svg class="a" style="left:725px;top:1405px;" width="24" height="22" viewBox="0 0 24 22"><rect width="24" height="22" fill="#e8f0f4"/><rect x="2" y="4" width="13" height="15" fill="#2a8a6a"/><rect x="16" y="4" width="6" height="15" fill="#d0dae0"/><rect x="18" y="2" width="3" height="6" fill="#3a8ad0"/></svg>
<div class="a" style="left:73.5px;top:1432px;width:7px;height:3px;background:#9a9a9a;border-radius:2px"></div>
<div class="a" style="left:117.5px;top:1432px;width:7px;height:3px;background:#9a9a9a;border-radius:2px"></div>
<div class="a" style="left:205.5px;top:1432px;width:7px;height:3px;background:#9a9a9a;border-radius:2px"></div>
<div class="a" style="left:557.5px;top:1432px;width:7px;height:3px;background:#9a9a9a;border-radius:2px"></div>
<div class="a" style="left:601.5px;top:1432px;width:7px;height:3px;background:#9a9a9a;border-radius:2px"></div>
<div class="a" style="left:645.5px;top:1432px;width:7px;height:3px;background:#9a9a9a;border-radius:2px"></div>
<div class="a" style="left:689.5px;top:1432px;width:7px;height:3px;background:#9a9a9a;border-radius:2px"></div>
<div class="a" style="left:161px;top:1432px;width:7px;height:3px;background:#f0a0b0;border-radius:2px"></div>
<div class="a" style="left:729px;top:1432px;width:16px;height:3px;background:#e0a0f0;border-radius:2px"></div>
<svg class="a" style="left:2343px;top:1411px;" width="12" height="8" viewBox="0 0 12 8"><path d="M1 7 L6 2 L11 7" stroke="#eee" stroke-width="1.5" fill="none"/></svg>
<div class="t" style="left:2372px;top:1408px;font-size:15px;color:#eee">英</div>
<svg class="a" style="left:2404px;top:1408px;" width="19" height="17" viewBox="0 0 19 17"><rect x="1" y="1" width="11" height="10" fill="none" stroke="#eee" stroke-width="1.1"/><path d="M4 14 H9 M6.5 11 V14" stroke="#eee" stroke-width="1.1"/><rect x="13.5" y="1" width="3" height="4" fill="none" stroke="#eee" stroke-width="1"/><path d="M15 5 V16" stroke="#eee" stroke-width="1.1"/></svg>
<svg class="a" style="left:2428px;top:1409px;" width="18" height="15" viewBox="0 0 18 15"><path d="M1 5 H4 L8 1.5 V13.5 L4 10 H1 Z" fill="none" stroke="#eee" stroke-width="1.1"/><path d="M10.5 5 Q12 7.5 10.5 10 M12.5 3.5 Q15 7.5 12.5 11.5" stroke="#eee" stroke-width="1.1" fill="none"/><path d="M14.5 2 Q18 7.5 14.5 13" stroke="#888" stroke-width="1" fill="none"/></svg>
<div class="t" style="left:2440px;top:1403px;width:76px;text-align:right;font-size:11.5px;color:#eee">17:31</div>
<div class="t" style="left:2440px;top:1419px;width:76px;text-align:right;font-size:11.5px;color:#eee">2024/9/29</div>
<svg class="a" style="left:2524px;top:1409px;" width="16" height="16" viewBox="0 0 16 16"><path d="M8 1 Q3 1 3 7 V11 L1.5 13 H14.5 L13 11 V7 Q13 1 8 1Z" fill="#e8b0f0"/><ellipse cx="8" cy="14.5" rx="2.2" ry="1.4" fill="#e8b0f0"/></svg></body></html>
